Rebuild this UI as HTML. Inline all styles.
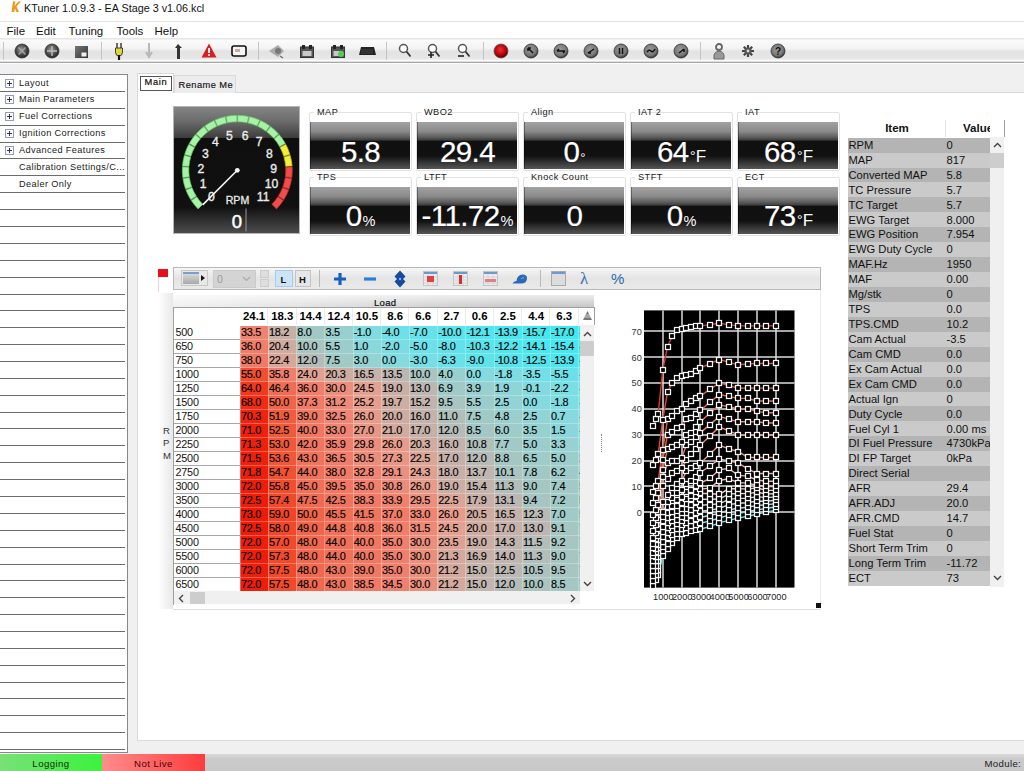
<!DOCTYPE html><html><head><meta charset="utf-8"><style>

*{margin:0;padding:0;box-sizing:border-box}
html,body{width:1024px;height:771px;overflow:hidden;background:#f0f0f0;font-family:"Liberation Sans", sans-serif;color:#000}
.a{position:absolute}
.t{position:absolute;white-space:nowrap;line-height:1}

</style></head><body>
<div class="a" style="left:0;top:0;width:1024px;height:22px;background:#fff;border-bottom:1px solid #e3e3e3"></div>
<svg class="a" style="left:9px;top:0px" width="12" height="13" viewBox="0 0 12 13"><path d="M4 1.5h2.5l-1 4.5 4-4.5h2.5l-4.5 5 2.5 5.5H7.5L6 8.5 5 12H2.5z" fill="#f0961e"/></svg>
<div class="t" style="left:24px;top:3.3px;font-size:10.8px;color:#111">KTuner 1.0.9.3 - EA Stage 3 v1.06.kcl</div>
<div class="a" style="left:0;top:22px;width:1024px;height:17px;background:#fff;border-bottom:1px solid #e6e6e6"></div>
<div class="t" style="left:6.5px;top:26px;font-size:11.5px;color:#111">File</div>
<div class="t" style="left:36px;top:26px;font-size:11.5px;color:#111">Edit</div>
<div class="t" style="left:68.5px;top:26px;font-size:11.5px;color:#111">Tuning</div>
<div class="t" style="left:116.5px;top:26px;font-size:11.5px;color:#111">Tools</div>
<div class="t" style="left:154.5px;top:26px;font-size:11.5px;color:#111">Help</div>
<div class="a" style="left:0;top:40px;width:1024px;height:23px;background:linear-gradient(#fbfbfb 0%,#f4f4f4 35%,#e3e3e3 50%,#e6e6e6 80%,#f7f7f7 88%,#fff 92%,#a8a8a8 96%,#a8a8a8 100%)"></div>
<div class="a" style="left:3px;top:42px;width:1px;height:18px;background:#c4c4c4"></div>
<div class="a" style="left:101px;top:42px;width:1px;height:18px;background:#c4c4c4"></div>
<div class="a" style="left:258px;top:42px;width:1px;height:18px;background:#c4c4c4"></div>
<div class="a" style="left:386px;top:42px;width:1px;height:18px;background:#c4c4c4"></div>
<div class="a" style="left:483px;top:42px;width:1px;height:18px;background:#c4c4c4"></div>
<div class="a" style="left:700px;top:42px;width:1px;height:18px;background:#c4c4c4"></div>
<div class="a" style="left:0;top:63px;width:1024px;height:1px;background:#fcfcfc"></div>
<svg class="a" style="left:14px;top:43px" width="16" height="16" viewBox="0 0 16 16"><defs><radialGradient id="g22" cx="0.45" cy="0.4" r="0.65"><stop offset="0" stop-color="#9a9a9a"/><stop offset="0.65" stop-color="#3e3e3e"/><stop offset="1" stop-color="#1a1a1a"/></radialGradient></defs><circle cx="8" cy="8" r="7" fill="url(#g22)" stroke="#333" stroke-width="0.8"/><path d="M4.5 4.5l7 7M11.5 4.5l-7 7" stroke="#a8a8a8" stroke-width="1.3"/></svg>
<svg class="a" style="left:44px;top:43px" width="16" height="16" viewBox="0 0 16 16"><defs><radialGradient id="g52" cx="0.45" cy="0.4" r="0.65"><stop offset="0" stop-color="#9a9a9a"/><stop offset="0.65" stop-color="#444"/><stop offset="1" stop-color="#1a1a1a"/></radialGradient></defs><circle cx="8" cy="8" r="7" fill="url(#g52)" stroke="#333" stroke-width="0.8"/><path d="M8 3v10M3 8h10" stroke="#bdbdbd" stroke-width="1.4"/></svg>
<svg class="a" style="left:75px;top:46px" width="13" height="12" viewBox="0 0 13 12"><defs><linearGradient id="fl" x1="0" y1="0" x2="1" y2="1"><stop offset="0" stop-color="#777"/><stop offset="1" stop-color="#333"/></linearGradient></defs><rect x="0" y="0" width="13" height="12" fill="url(#fl)"/><rect x="6.5" y="6.5" width="5" height="4" fill="#f0f0f0"/></svg>
<svg class="a" style="left:113px;top:43px" width="12" height="18" viewBox="0 0 12 18"><path d="M4 0v5M8 0v5" stroke="#222" stroke-width="1.3"/><path d="M2.5 5h7v4q0 4-3.5 4t-3.5-4z" fill="#dcd838" stroke="#333" stroke-width="0.9"/><path d="M6 12v5" stroke="#111" stroke-width="2.2"/></svg>
<svg class="a" style="left:144px;top:42px" width="10" height="18" viewBox="0 0 10 18"><path d="M5 1v13M2 10l3 5 3-5" stroke="#b8b8b8" stroke-width="2" fill="none"/></svg>
<svg class="a" style="left:174px;top:43px" width="10" height="17" viewBox="0 0 10 17"><path d="M4 1L1 5h2v11h3V5h2z" fill="#333"/></svg>
<svg class="a" style="left:201px;top:43px" width="16" height="15" viewBox="0 0 16 15"><path d="M8 0.5L15.5 14.5H0.5z" fill="#d42020"/><path d="M8 5v5" stroke="#fff" stroke-width="1.8"/><circle cx="8" cy="12" r="1" fill="#fff"/></svg>
<svg class="a" style="left:231px;top:45px" width="16" height="12" viewBox="0 0 16 12"><rect x="1" y="1" width="14" height="10" rx="2" fill="#f4f4f4" stroke="#111" stroke-width="1.6"/><rect x="4" y="4" width="5" height="3" fill="#caa"/></svg>
<svg class="a" style="left:268px;top:43px" width="17" height="16" viewBox="0 0 17 16"><path d="M1 8l9-6 6 6-6 6z" fill="#aaa"/><circle cx="10" cy="8" r="3" fill="#777"/><path d="M12 13l3 2" stroke="#666" stroke-width="1.2"/></svg>
<svg class="a" style="left:300px;top:45px" width="14" height="13" viewBox="0 0 14 13"><rect x="0.5" y="2" width="13" height="10.5" fill="#555" stroke="#333"/><rect x="2" y="0" width="3" height="4" fill="#222"/><rect x="9" y="0" width="3" height="4" fill="#222"/><rect x="2.5" y="6" width="9" height="5" fill="#c8c8c8"/></svg>
<svg class="a" style="left:331px;top:45px" width="14" height="13" viewBox="0 0 14 13"><rect x="0.5" y="2" width="13" height="10.5" fill="#555" stroke="#333"/><rect x="2" y="0" width="3" height="4" fill="#222"/><rect x="9" y="0" width="3" height="4" fill="#222"/><rect x="2.5" y="6" width="9" height="5" fill="#c8c8c8"/><circle cx="10" cy="9" r="3" fill="#5c5"/></svg>
<svg class="a" style="left:359px;top:47px" width="17" height="9" viewBox="0 0 17 9"><path d="M2 0h13l2 8H0z" fill="#222"/><path d="M3 2v5M5 2v5M7 2v5M9 2v5M11 2v5M13 2v5" stroke="#555" stroke-width="0.7"/></svg>
<svg class="a" style="left:398px;top:43px" width="14" height="16" viewBox="0 0 14 16"><circle cx="5.5" cy="5.5" r="4" fill="#fff" stroke="#555" stroke-width="1.5"/><path d="M8.5 8.5l4 5" stroke="#333" stroke-width="1.8"/></svg>
<svg class="a" style="left:427px;top:43px" width="14" height="16" viewBox="0 0 14 16"><circle cx="5.5" cy="5.5" r="4" fill="#fff" stroke="#555" stroke-width="1.5"/><path d="M8.5 8.5l4 5" stroke="#333" stroke-width="1.8"/><path d="M1 12h6M4 9v6" stroke="#222" stroke-width="1.6"/></svg>
<svg class="a" style="left:457px;top:43px" width="14" height="16" viewBox="0 0 14 16"><circle cx="5.5" cy="5.5" r="4" fill="#fff" stroke="#555" stroke-width="1.5"/><path d="M8.5 8.5l4 5" stroke="#333" stroke-width="1.8"/><path d="M1 13h6" stroke="#222" stroke-width="1.6"/></svg>
<svg class="a" style="left:493px;top:43px" width="16" height="16" viewBox="0 0 16 16"><defs><radialGradient id="rr" cx="0.45" cy="0.4" r="0.6"><stop offset="0" stop-color="#f03030"/><stop offset="0.7" stop-color="#b00000"/><stop offset="1" stop-color="#400"/></radialGradient></defs><circle cx="8" cy="8" r="7" fill="url(#rr)" stroke="#555" stroke-width="0.8"/></svg>
<svg class="a" style="left:523px;top:43px" width="16" height="16" viewBox="0 0 16 16"><defs><radialGradient id="g531" cx="0.45" cy="0.4" r="0.65"><stop offset="0" stop-color="#9a9a9a"/><stop offset="0.65" stop-color="#777"/><stop offset="1" stop-color="#1a1a1a"/></radialGradient></defs><circle cx="8" cy="8" r="7" fill="url(#g531)" stroke="#333" stroke-width="0.8"/><path d="M5 5l5 5M5 5h3M5 5v3" stroke="#111" stroke-width="1.5" fill="none"/></svg>
<svg class="a" style="left:553px;top:43px" width="16" height="16" viewBox="0 0 16 16"><defs><radialGradient id="g561" cx="0.45" cy="0.4" r="0.65"><stop offset="0" stop-color="#9a9a9a"/><stop offset="0.65" stop-color="#777"/><stop offset="1" stop-color="#1a1a1a"/></radialGradient></defs><circle cx="8" cy="8" r="7" fill="url(#g561)" stroke="#333" stroke-width="0.8"/><path d="M4 8h8M4 8l2-2M12 8l-2 2" stroke="#111" stroke-width="1.5" fill="none"/></svg>
<svg class="a" style="left:583px;top:43px" width="16" height="16" viewBox="0 0 16 16"><defs><radialGradient id="g591" cx="0.45" cy="0.4" r="0.65"><stop offset="0" stop-color="#9a9a9a"/><stop offset="0.65" stop-color="#777"/><stop offset="1" stop-color="#1a1a1a"/></radialGradient></defs><circle cx="8" cy="8" r="7" fill="url(#g591)" stroke="#333" stroke-width="0.8"/><path d="M5 10l6-4M5 10h3" stroke="#111" stroke-width="1.5" fill="none"/></svg>
<svg class="a" style="left:613px;top:43px" width="16" height="16" viewBox="0 0 16 16"><defs><radialGradient id="g621" cx="0.45" cy="0.4" r="0.65"><stop offset="0" stop-color="#9a9a9a"/><stop offset="0.65" stop-color="#777"/><stop offset="1" stop-color="#1a1a1a"/></radialGradient></defs><circle cx="8" cy="8" r="7" fill="url(#g621)" stroke="#333" stroke-width="0.8"/><path d="M6.5 5v6M9.5 5v6" stroke="#111" stroke-width="1.5" fill="none"/></svg>
<svg class="a" style="left:643px;top:43px" width="16" height="16" viewBox="0 0 16 16"><defs><radialGradient id="g651" cx="0.45" cy="0.4" r="0.65"><stop offset="0" stop-color="#9a9a9a"/><stop offset="0.65" stop-color="#777"/><stop offset="1" stop-color="#1a1a1a"/></radialGradient></defs><circle cx="8" cy="8" r="7" fill="url(#g651)" stroke="#333" stroke-width="0.8"/><path d="M4 9q2-3 4-1t4-2" stroke="#111" stroke-width="1.5" fill="none"/></svg>
<svg class="a" style="left:673px;top:43px" width="16" height="16" viewBox="0 0 16 16"><defs><radialGradient id="g681" cx="0.45" cy="0.4" r="0.65"><stop offset="0" stop-color="#9a9a9a"/><stop offset="0.65" stop-color="#777"/><stop offset="1" stop-color="#1a1a1a"/></radialGradient></defs><circle cx="8" cy="8" r="7" fill="url(#g681)" stroke="#333" stroke-width="0.8"/><path d="M6 10l5-4M11 6v3" stroke="#111" stroke-width="1.5" fill="none"/></svg>
<svg class="a" style="left:712px;top:42px" width="14" height="18" viewBox="0 0 14 18"><circle cx="7" cy="5" r="3" fill="none" stroke="#666" stroke-width="1.8"/><path d="M2 17v-3q0-4 5-5 5 1 5 5v3z" fill="#999" stroke="#666"/></svg>
<svg class="a" style="left:741px;top:44px" width="14" height="14" viewBox="0 0 14 14"><g stroke="#444" stroke-width="2.2"><path d="M7 1v12M1 7h12M2.8 2.8l8.4 8.4M11.2 2.8l-8.4 8.4"/></g><circle cx="7" cy="7" r="3.6" fill="#555"/><circle cx="7" cy="7" r="1.4" fill="#ddd"/></svg>
<svg class="a" style="left:770px;top:43px" width="16" height="16" viewBox="0 0 16 16"><defs><radialGradient id="g778" cx="0.45" cy="0.4" r="0.65"><stop offset="0" stop-color="#9a9a9a"/><stop offset="0.65" stop-color="#777"/><stop offset="1" stop-color="#1a1a1a"/></radialGradient></defs><circle cx="8" cy="8" r="7" fill="url(#g778)" stroke="#333" stroke-width="0.8"/><text x="8" y="11.5" font-size="10" font-weight="bold" text-anchor="middle" fill="#111" font-family="Liberation Sans">?</text></svg>
<div class="a" style="left:0;top:74px;width:128px;height:679px;background:#fff;border:1px solid #888;border-left:none"></div>
<div class="a" style="left:0;top:91px;width:125px;height:1px;background:#6c6c6c"></div>
<div class="a" style="left:0;top:108px;width:125px;height:1px;background:#6c6c6c"></div>
<div class="a" style="left:0;top:125px;width:125px;height:1px;background:#6c6c6c"></div>
<div class="a" style="left:0;top:142px;width:125px;height:1px;background:#6c6c6c"></div>
<div class="a" style="left:0;top:158px;width:125px;height:1px;background:#6c6c6c"></div>
<div class="a" style="left:0;top:175px;width:125px;height:1px;background:#6c6c6c"></div>
<div class="a" style="left:0;top:192px;width:125px;height:1px;background:#6c6c6c"></div>
<div class="a" style="left:0;top:209px;width:125px;height:1px;background:#6c6c6c"></div>
<div class="a" style="left:0;top:226px;width:125px;height:1px;background:#6c6c6c"></div>
<div class="a" style="left:0;top:243px;width:125px;height:1px;background:#6c6c6c"></div>
<div class="a" style="left:0;top:260px;width:125px;height:1px;background:#6c6c6c"></div>
<div class="a" style="left:0;top:277px;width:125px;height:1px;background:#6c6c6c"></div>
<div class="a" style="left:0;top:294px;width:125px;height:1px;background:#6c6c6c"></div>
<div class="a" style="left:0;top:310px;width:125px;height:1px;background:#6c6c6c"></div>
<div class="a" style="left:0;top:327px;width:125px;height:1px;background:#6c6c6c"></div>
<div class="a" style="left:0;top:344px;width:125px;height:1px;background:#6c6c6c"></div>
<div class="a" style="left:0;top:361px;width:125px;height:1px;background:#6c6c6c"></div>
<div class="a" style="left:0;top:378px;width:125px;height:1px;background:#6c6c6c"></div>
<div class="a" style="left:0;top:395px;width:125px;height:1px;background:#6c6c6c"></div>
<div class="a" style="left:0;top:412px;width:125px;height:1px;background:#6c6c6c"></div>
<div class="a" style="left:0;top:428px;width:125px;height:1px;background:#6c6c6c"></div>
<div class="a" style="left:0;top:445px;width:125px;height:1px;background:#6c6c6c"></div>
<div class="a" style="left:0;top:462px;width:125px;height:1px;background:#6c6c6c"></div>
<div class="a" style="left:0;top:479px;width:125px;height:1px;background:#6c6c6c"></div>
<div class="a" style="left:0;top:496px;width:125px;height:1px;background:#6c6c6c"></div>
<div class="a" style="left:0;top:513px;width:125px;height:1px;background:#6c6c6c"></div>
<div class="a" style="left:0;top:530px;width:125px;height:1px;background:#6c6c6c"></div>
<div class="a" style="left:0;top:547px;width:125px;height:1px;background:#6c6c6c"></div>
<div class="a" style="left:0;top:564px;width:125px;height:1px;background:#6c6c6c"></div>
<div class="a" style="left:0;top:580px;width:125px;height:1px;background:#6c6c6c"></div>
<div class="a" style="left:0;top:597px;width:125px;height:1px;background:#6c6c6c"></div>
<div class="a" style="left:0;top:614px;width:125px;height:1px;background:#6c6c6c"></div>
<div class="a" style="left:0;top:631px;width:125px;height:1px;background:#6c6c6c"></div>
<div class="a" style="left:0;top:648px;width:125px;height:1px;background:#6c6c6c"></div>
<div class="a" style="left:0;top:665px;width:125px;height:1px;background:#6c6c6c"></div>
<div class="a" style="left:0;top:682px;width:125px;height:1px;background:#6c6c6c"></div>
<div class="a" style="left:0;top:698px;width:125px;height:1px;background:#6c6c6c"></div>
<div class="a" style="left:0;top:715px;width:125px;height:1px;background:#6c6c6c"></div>
<div class="a" style="left:0;top:732px;width:125px;height:1px;background:#6c6c6c"></div>
<div class="a" style="left:0;top:749px;width:125px;height:1px;background:#6c6c6c"></div>
<div class="a" style="left:5px;top:78.5px;width:9px;height:9px;border:1px solid #9a9ab0;background:#f8f8ff"></div>
<div class="a" style="left:7px;top:82.5px;width:5px;height:1px;background:#334"></div>
<div class="a" style="left:9px;top:80.5px;width:1px;height:5px;background:#334"></div>
<div class="t" style="left:19px;top:78.5px;font-size:9.2px;letter-spacing:0.38px;color:#1a1a1a">Layout</div>
<div class="a" style="left:5px;top:95.4px;width:9px;height:9px;border:1px solid #9a9ab0;background:#f8f8ff"></div>
<div class="a" style="left:7px;top:99.4px;width:5px;height:1px;background:#334"></div>
<div class="a" style="left:9px;top:97.4px;width:1px;height:5px;background:#334"></div>
<div class="t" style="left:19px;top:95.4px;font-size:9.2px;letter-spacing:0.38px;color:#1a1a1a">Main Parameters</div>
<div class="a" style="left:5px;top:112.2px;width:9px;height:9px;border:1px solid #9a9ab0;background:#f8f8ff"></div>
<div class="a" style="left:7px;top:116.2px;width:5px;height:1px;background:#334"></div>
<div class="a" style="left:9px;top:114.2px;width:1px;height:5px;background:#334"></div>
<div class="t" style="left:19px;top:112.2px;font-size:9.2px;letter-spacing:0.38px;color:#1a1a1a">Fuel Corrections</div>
<div class="a" style="left:5px;top:129.1px;width:9px;height:9px;border:1px solid #9a9ab0;background:#f8f8ff"></div>
<div class="a" style="left:7px;top:133.1px;width:5px;height:1px;background:#334"></div>
<div class="a" style="left:9px;top:131.1px;width:1px;height:5px;background:#334"></div>
<div class="t" style="left:19px;top:129.1px;font-size:9.2px;letter-spacing:0.38px;color:#1a1a1a">Ignition Corrections</div>
<div class="a" style="left:5px;top:146.0px;width:9px;height:9px;border:1px solid #9a9ab0;background:#f8f8ff"></div>
<div class="a" style="left:7px;top:150.0px;width:5px;height:1px;background:#334"></div>
<div class="a" style="left:9px;top:148.0px;width:1px;height:5px;background:#334"></div>
<div class="t" style="left:19px;top:146.0px;font-size:9.2px;letter-spacing:0.38px;color:#1a1a1a">Advanced Features</div>
<div class="t" style="left:19px;top:162.9px;font-size:9.2px;letter-spacing:0.38px;color:#1a1a1a">Calibration Settings/C...</div>
<div class="t" style="left:19px;top:179.8px;font-size:9.2px;letter-spacing:0.38px;color:#1a1a1a">Dealer Only</div>
<div class="a" style="left:137px;top:92px;width:900px;height:649px;background:#fff;border:1px solid #d9d9d9"></div>
<div class="a" style="left:174px;top:75px;width:62px;height:18px;background:#ececec;border:1px solid #dadada;border-bottom:none"></div>
<div class="t" style="left:178.5px;top:80.6px;font-size:9.3px;letter-spacing:0.45px;color:#111;-webkit-text-stroke:0.15px #111">Rename Me</div>
<div class="a" style="left:137px;top:73px;width:37px;height:20px;background:#fff;border:1px solid #d9d9d9;border-bottom:none"></div>
<div class="a" style="left:140px;top:76px;width:32px;height:15px;border:1px solid #555"></div>
<div class="t" style="left:144.5px;top:78.3px;font-size:9.3px;letter-spacing:0.7px;color:#111;-webkit-text-stroke:0.2px #111">Main</div>
<svg class="a" style="left:173px;top:106px" width="128" height="128" viewBox="0 0 128 128"><defs><linearGradient id="gbg" x1="0" y1="0" x2="0" y2="1"><stop offset="0" stop-color="#858585"/><stop offset="0.12" stop-color="#6a6a6a"/><stop offset="0.25" stop-color="#3c3c3c"/><stop offset="0.252" stop-color="#0f0f0f"/><stop offset="0.79" stop-color="#101010"/><stop offset="1" stop-color="#4e4e4e"/></linearGradient></defs><rect x="0.5" y="0.5" width="126" height="127" fill="url(#gbg)" stroke="#b4b4b4" stroke-width="1"/><path d="M25.10 102.88A55.0 55.0 0 0 1 18.27 94.40L23.71 90.84A48.5 48.5 0 0 0 29.74 98.32Z" fill="#a6f2a6" stroke="#66c466" stroke-width="0.7"/><path d="M17.80 93.67A55.0 55.0 0 0 1 12.92 83.92L18.99 81.61A48.5 48.5 0 0 0 23.29 90.20Z" fill="#a6f2a6" stroke="#66c466" stroke-width="0.7"/><path d="M12.62 83.12A55.0 55.0 0 0 1 9.92 72.55L16.35 71.58A48.5 48.5 0 0 0 18.73 80.89Z" fill="#a6f2a6" stroke="#66c466" stroke-width="0.7"/><path d="M9.80 71.70A55.0 55.0 0 0 1 9.41 60.81L15.90 61.22A48.5 48.5 0 0 0 16.24 70.83Z" fill="#a6f2a6" stroke="#66c466" stroke-width="0.7"/><path d="M9.47 59.95A55.0 55.0 0 0 1 11.41 49.22L17.66 51.00A48.5 48.5 0 0 0 15.95 60.46Z" fill="#a6f2a6" stroke="#66c466" stroke-width="0.7"/><path d="M11.65 48.39A55.0 55.0 0 0 1 15.82 38.32L21.55 41.39A48.5 48.5 0 0 0 17.87 50.27Z" fill="#a6f2a6" stroke="#66c466" stroke-width="0.7"/><path d="M16.24 37.56A55.0 55.0 0 0 1 22.45 28.61L27.40 32.83A48.5 48.5 0 0 0 21.92 40.72Z" fill="#a6f2a6" stroke="#66c466" stroke-width="0.7"/><path d="M23.02 27.96A55.0 55.0 0 0 1 30.99 20.53L34.93 25.70A48.5 48.5 0 0 0 27.90 32.25Z" fill="#a6f2a6" stroke="#66c466" stroke-width="0.7"/><path d="M31.69 20.01A55.0 55.0 0 0 1 41.06 14.45L43.81 20.34A48.5 48.5 0 0 0 35.54 25.25Z" fill="#a6f2a6" stroke="#66c466" stroke-width="0.7"/><path d="M41.85 14.09A55.0 55.0 0 0 1 52.19 10.65L53.62 16.99A48.5 48.5 0 0 0 44.50 20.03Z" fill="#a6f2a6" stroke="#66c466" stroke-width="0.7"/><path d="M53.03 10.47A55.0 55.0 0 0 1 63.87 9.30L63.92 15.80A48.5 48.5 0 0 0 54.36 16.83Z" fill="#a6f2a6" stroke="#66c466" stroke-width="0.7"/><path d="M64.73 9.30A55.0 55.0 0 0 1 75.57 10.47L74.24 16.83A48.5 48.5 0 0 0 64.68 15.80Z" fill="#a6f2a6" stroke="#66c466" stroke-width="0.7"/><path d="M76.41 10.65A55.0 55.0 0 0 1 86.75 14.09L84.10 20.03A48.5 48.5 0 0 0 74.98 16.99Z" fill="#a6f2a6" stroke="#66c466" stroke-width="0.7"/><path d="M87.54 14.45A55.0 55.0 0 0 1 96.91 20.01L93.06 25.25A48.5 48.5 0 0 0 84.79 20.34Z" fill="#a6f2a6" stroke="#66c466" stroke-width="0.7"/><path d="M97.61 20.53A55.0 55.0 0 0 1 105.58 27.96L100.70 32.25A48.5 48.5 0 0 0 93.67 25.70Z" fill="#a6f2a6" stroke="#66c466" stroke-width="0.7"/><path d="M106.15 28.61A55.0 55.0 0 0 1 112.36 37.56L106.68 40.72A48.5 48.5 0 0 0 101.20 32.83Z" fill="#a6f2a6" stroke="#66c466" stroke-width="0.7"/><path d="M112.78 38.32A55.0 55.0 0 0 1 116.95 48.39L110.73 50.27A48.5 48.5 0 0 0 107.05 41.39Z" fill="#f2f034" stroke="#b8b020" stroke-width="0.7"/><path d="M117.19 49.22A55.0 55.0 0 0 1 119.13 59.95L112.65 60.46A48.5 48.5 0 0 0 110.94 51.00Z" fill="#f2f034" stroke="#b8b020" stroke-width="0.7"/><path d="M119.19 60.81A55.0 55.0 0 0 1 118.80 71.70L112.36 70.83A48.5 48.5 0 0 0 112.70 61.22Z" fill="#f44a4a" stroke="#c03030" stroke-width="0.7"/><path d="M118.68 72.55A55.0 55.0 0 0 1 115.98 83.12L109.87 80.89A48.5 48.5 0 0 0 112.25 71.58Z" fill="#f44a4a" stroke="#c03030" stroke-width="0.7"/><path d="M115.68 83.92A55.0 55.0 0 0 1 110.80 93.67L105.31 90.20A48.5 48.5 0 0 0 109.61 81.61Z" fill="#f44a4a" stroke="#c03030" stroke-width="0.7"/><path d="M110.33 94.40A55.0 55.0 0 0 1 103.50 102.88L98.86 98.32A48.5 48.5 0 0 0 104.89 90.84Z" fill="#f44a4a" stroke="#c03030" stroke-width="0.7"/><text x="38.5" y="95.3" font-size="12.2" fill="#ececec" stroke="#ececec" stroke-width="0.35" text-anchor="middle" font-family="Liberation Sans">0</text><text x="30.1" y="82.3" font-size="12.2" fill="#ececec" stroke="#ececec" stroke-width="0.35" text-anchor="middle" font-family="Liberation Sans">1</text><text x="27.9" y="66.9" font-size="12.2" fill="#ececec" stroke="#ececec" stroke-width="0.35" text-anchor="middle" font-family="Liberation Sans">2</text><text x="32.3" y="52.0" font-size="12.2" fill="#ececec" stroke="#ececec" stroke-width="0.35" text-anchor="middle" font-family="Liberation Sans">3</text><text x="42.4" y="40.3" font-size="12.2" fill="#ececec" stroke="#ececec" stroke-width="0.35" text-anchor="middle" font-family="Liberation Sans">4</text><text x="56.5" y="33.8" font-size="12.2" fill="#ececec" stroke="#ececec" stroke-width="0.35" text-anchor="middle" font-family="Liberation Sans">5</text><text x="72.1" y="33.8" font-size="12.2" fill="#ececec" stroke="#ececec" stroke-width="0.35" text-anchor="middle" font-family="Liberation Sans">6</text><text x="86.2" y="40.3" font-size="12.2" fill="#ececec" stroke="#ececec" stroke-width="0.35" text-anchor="middle" font-family="Liberation Sans">7</text><text x="96.3" y="52.0" font-size="12.2" fill="#ececec" stroke="#ececec" stroke-width="0.35" text-anchor="middle" font-family="Liberation Sans">8</text><text x="100.7" y="66.9" font-size="12.2" fill="#ececec" stroke="#ececec" stroke-width="0.35" text-anchor="middle" font-family="Liberation Sans">9</text><text x="98.5" y="82.3" font-size="12.2" fill="#ececec" stroke="#ececec" stroke-width="0.35" text-anchor="middle" font-family="Liberation Sans">10</text><text x="90.1" y="95.3" font-size="12.2" fill="#ececec" stroke="#ececec" stroke-width="0.35" text-anchor="middle" font-family="Liberation Sans">11</text><path d="M64.3 64.3L29.7 98.9" stroke="#f4f4f4" stroke-width="1.6"/><circle cx="64.3" cy="64.3" r="2.4" fill="#f4f4f4"/><text x="64.5" y="97.5" font-size="10.6" fill="#e8e8e8" stroke="#e8e8e8" stroke-width="0.3" text-anchor="middle" font-family="Liberation Sans">RPM</text><text x="64" y="122" font-size="18.5" fill="#fff" stroke="#fff" stroke-width="0.5" text-anchor="middle" font-family="Liberation Sans">0</text><path d="M73 102.5V125.5" stroke="#9a9a9a" stroke-width="1"/></svg>
<svg width="0" height="0" style="position:absolute"><defs><linearGradient id="dbg" x1="0" y1="0" x2="0" y2="1"><stop offset="0" stop-color="#a2a2a2"/><stop offset="0.2" stop-color="#8a8a8a"/><stop offset="0.32" stop-color="#5e5e5e"/><stop offset="0.39" stop-color="#3a3a3a"/><stop offset="0.40" stop-color="#101010"/><stop offset="0.72" stop-color="#111"/><stop offset="1" stop-color="#565656"/></linearGradient></defs></svg>
<div class="a" style="left:309px;top:112.0px;width:103px;height:59px;border:1px solid #e2e2e2;border-radius:2px"></div>
<svg class="a" style="left:310px;top:122.0px" width="100" height="47"><rect width="100" height="47" fill="url(#dbg)"/><rect x="0" y="0" width="1" height="47" fill="#000" opacity="0.35"/></svg>
<div class="a" style="left:314px;top:109.0px;height:9px;padding:0 2px;background:#fff"></div>
<div class="t" style="left:317px;top:108.2px;font-size:9.2px;letter-spacing:0.45px;color:#1a1a1a">MAP</div>
<div class="t" style="left:309px;top:136.8px;width:103px;text-align:center;font-size:29.5px;letter-spacing:-0.6px;color:#fff;-webkit-text-stroke:0.2px #fff">5.8</div>
<div class="a" style="left:416px;top:112.0px;width:103px;height:59px;border:1px solid #e2e2e2;border-radius:2px"></div>
<svg class="a" style="left:417px;top:122.0px" width="100" height="47"><rect width="100" height="47" fill="url(#dbg)"/><rect x="0" y="0" width="1" height="47" fill="#000" opacity="0.35"/></svg>
<div class="a" style="left:421px;top:109.0px;height:9px;padding:0 2px;background:#fff"></div>
<div class="t" style="left:424px;top:108.2px;font-size:9.2px;letter-spacing:0.45px;color:#1a1a1a">WBO2</div>
<div class="t" style="left:416px;top:136.8px;width:103px;text-align:center;font-size:29.5px;letter-spacing:-0.6px;color:#fff;-webkit-text-stroke:0.2px #fff">29.4</div>
<div class="a" style="left:523px;top:112.0px;width:103px;height:59px;border:1px solid #e2e2e2;border-radius:2px"></div>
<svg class="a" style="left:524px;top:122.0px" width="100" height="47"><rect width="100" height="47" fill="url(#dbg)"/><rect x="0" y="0" width="1" height="47" fill="#000" opacity="0.35"/></svg>
<div class="a" style="left:528px;top:109.0px;height:9px;padding:0 2px;background:#fff"></div>
<div class="t" style="left:531px;top:108.2px;font-size:9.2px;letter-spacing:0.45px;color:#1a1a1a">Align</div>
<div class="t" style="left:523px;top:136.8px;width:103px;text-align:center;font-size:29.5px;letter-spacing:-0.6px;color:#fff;-webkit-text-stroke:0.2px #fff">0<span style="font-size:13px;letter-spacing:0;margin-left:1px;-webkit-text-stroke:0">°</span></div>
<div class="a" style="left:630px;top:112.0px;width:103px;height:59px;border:1px solid #e2e2e2;border-radius:2px"></div>
<svg class="a" style="left:631px;top:122.0px" width="100" height="47"><rect width="100" height="47" fill="url(#dbg)"/><rect x="0" y="0" width="1" height="47" fill="#000" opacity="0.35"/></svg>
<div class="a" style="left:635px;top:109.0px;height:9px;padding:0 2px;background:#fff"></div>
<div class="t" style="left:638px;top:108.2px;font-size:9.2px;letter-spacing:0.45px;color:#1a1a1a">IAT 2</div>
<div class="t" style="left:630px;top:136.8px;width:103px;text-align:center;font-size:29.5px;letter-spacing:-0.6px;color:#fff;-webkit-text-stroke:0.2px #fff">64<span style="font-size:14px;letter-spacing:0;margin-left:1.5px;-webkit-text-stroke:0;position:relative;top:-1px">°</span><span style="font-size:17px;letter-spacing:0;-webkit-text-stroke:0">F</span></div>
<div class="a" style="left:737px;top:112.0px;width:103px;height:59px;border:1px solid #e2e2e2;border-radius:2px"></div>
<svg class="a" style="left:738px;top:122.0px" width="100" height="47"><rect width="100" height="47" fill="url(#dbg)"/><rect x="0" y="0" width="1" height="47" fill="#000" opacity="0.35"/></svg>
<div class="a" style="left:742px;top:109.0px;height:9px;padding:0 2px;background:#fff"></div>
<div class="t" style="left:745px;top:108.2px;font-size:9.2px;letter-spacing:0.45px;color:#1a1a1a">IAT</div>
<div class="t" style="left:737px;top:136.8px;width:103px;text-align:center;font-size:29.5px;letter-spacing:-0.6px;color:#fff;-webkit-text-stroke:0.2px #fff">68<span style="font-size:14px;letter-spacing:0;margin-left:1.5px;-webkit-text-stroke:0;position:relative;top:-1px">°</span><span style="font-size:17px;letter-spacing:0;-webkit-text-stroke:0">F</span></div>
<div class="a" style="left:309px;top:176.5px;width:103px;height:59px;border:1px solid #e2e2e2;border-radius:2px"></div>
<svg class="a" style="left:310px;top:186.5px" width="100" height="47"><rect width="100" height="47" fill="url(#dbg)"/><rect x="0" y="0" width="1" height="47" fill="#000" opacity="0.35"/></svg>
<div class="a" style="left:314px;top:173.5px;height:9px;padding:0 2px;background:#fff"></div>
<div class="t" style="left:317px;top:172.7px;font-size:9.2px;letter-spacing:0.45px;color:#1a1a1a">TPS</div>
<div class="t" style="left:309px;top:201.3px;width:103px;text-align:center;font-size:29.5px;letter-spacing:-0.6px;color:#fff;-webkit-text-stroke:0.2px #fff">0<span style="font-size:14.5px;letter-spacing:0;margin-left:1px;-webkit-text-stroke:0">%</span></div>
<div class="a" style="left:416px;top:176.5px;width:103px;height:59px;border:1px solid #e2e2e2;border-radius:2px"></div>
<svg class="a" style="left:417px;top:186.5px" width="100" height="47"><rect width="100" height="47" fill="url(#dbg)"/><rect x="0" y="0" width="1" height="47" fill="#000" opacity="0.35"/></svg>
<div class="a" style="left:421px;top:173.5px;height:9px;padding:0 2px;background:#fff"></div>
<div class="t" style="left:424px;top:172.7px;font-size:9.2px;letter-spacing:0.45px;color:#1a1a1a">LTFT</div>
<div class="t" style="left:416px;top:201.3px;width:103px;text-align:center;font-size:29.5px;letter-spacing:-0.6px;color:#fff;-webkit-text-stroke:0.2px #fff">-11.72<span style="font-size:14.5px;letter-spacing:0;margin-left:1px;-webkit-text-stroke:0">%</span></div>
<div class="a" style="left:523px;top:176.5px;width:103px;height:59px;border:1px solid #e2e2e2;border-radius:2px"></div>
<svg class="a" style="left:524px;top:186.5px" width="100" height="47"><rect width="100" height="47" fill="url(#dbg)"/><rect x="0" y="0" width="1" height="47" fill="#000" opacity="0.35"/></svg>
<div class="a" style="left:528px;top:173.5px;height:9px;padding:0 2px;background:#fff"></div>
<div class="t" style="left:531px;top:172.7px;font-size:9.2px;letter-spacing:0.45px;color:#1a1a1a">Knock Count</div>
<div class="t" style="left:523px;top:201.3px;width:103px;text-align:center;font-size:29.5px;letter-spacing:-0.6px;color:#fff;-webkit-text-stroke:0.2px #fff">0</div>
<div class="a" style="left:630px;top:176.5px;width:103px;height:59px;border:1px solid #e2e2e2;border-radius:2px"></div>
<svg class="a" style="left:631px;top:186.5px" width="100" height="47"><rect width="100" height="47" fill="url(#dbg)"/><rect x="0" y="0" width="1" height="47" fill="#000" opacity="0.35"/></svg>
<div class="a" style="left:635px;top:173.5px;height:9px;padding:0 2px;background:#fff"></div>
<div class="t" style="left:638px;top:172.7px;font-size:9.2px;letter-spacing:0.45px;color:#1a1a1a">STFT</div>
<div class="t" style="left:630px;top:201.3px;width:103px;text-align:center;font-size:29.5px;letter-spacing:-0.6px;color:#fff;-webkit-text-stroke:0.2px #fff">0<span style="font-size:14.5px;letter-spacing:0;margin-left:1px;-webkit-text-stroke:0">%</span></div>
<div class="a" style="left:737px;top:176.5px;width:103px;height:59px;border:1px solid #e2e2e2;border-radius:2px"></div>
<svg class="a" style="left:738px;top:186.5px" width="100" height="47"><rect width="100" height="47" fill="url(#dbg)"/><rect x="0" y="0" width="1" height="47" fill="#000" opacity="0.35"/></svg>
<div class="a" style="left:742px;top:173.5px;height:9px;padding:0 2px;background:#fff"></div>
<div class="t" style="left:745px;top:172.7px;font-size:9.2px;letter-spacing:0.45px;color:#1a1a1a">ECT</div>
<div class="t" style="left:737px;top:201.3px;width:103px;text-align:center;font-size:29.5px;letter-spacing:-0.6px;color:#fff;-webkit-text-stroke:0.2px #fff">73<span style="font-size:14px;letter-spacing:0;margin-left:1.5px;-webkit-text-stroke:0;position:relative;top:-1px">°</span><span style="font-size:17px;letter-spacing:0;-webkit-text-stroke:0">F</span></div>
<div class="a" style="left:945px;top:120px;width:1px;height:17px;background:#e4e4e4"></div>
<div class="a" style="left:1004px;top:120px;width:1px;height:17px;background:#a0a0a0"></div>
<div class="t" style="left:848px;top:123px;width:98px;text-align:center;font-size:11.5px;font-weight:bold;color:#111">Item</div>
<div class="a" style="left:946px;top:120px;width:44px;height:17px;overflow:hidden"><div class="t" style="left:17px;top:3px;font-size:11.5px;font-weight:bold;color:#111">Value</div></div>
<div class="a" style="left:848px;top:137px;width:142px;height:450px;overflow:hidden">
<div class="a" style="left:0;top:1px;width:142px;height:15px;background:#b4b4b4"></div>
<div class="t" style="left:0.5px;top:2.8px;font-size:11.2px;color:#111">RPM</div>
<div class="t" style="left:98.5px;top:2.8px;font-size:11.2px;color:#111">0</div>
<div class="a" style="left:0;top:16px;width:142px;height:15px;background:#cacaca"></div>
<div class="t" style="left:0.5px;top:17.7px;font-size:11.2px;color:#111">MAP</div>
<div class="t" style="left:98.5px;top:17.7px;font-size:11.2px;color:#111">817</div>
<div class="a" style="left:0;top:31px;width:142px;height:14px;background:#b4b4b4"></div>
<div class="t" style="left:0.5px;top:32.7px;font-size:11.2px;color:#111">Converted MAP</div>
<div class="t" style="left:98.5px;top:32.7px;font-size:11.2px;color:#111">5.8</div>
<div class="a" style="left:0;top:45px;width:142px;height:15px;background:#cacaca"></div>
<div class="t" style="left:0.5px;top:47.6px;font-size:11.2px;color:#111">TC Pressure</div>
<div class="t" style="left:98.5px;top:47.6px;font-size:11.2px;color:#111">5.7</div>
<div class="a" style="left:0;top:60px;width:142px;height:15px;background:#b4b4b4"></div>
<div class="t" style="left:0.5px;top:62.5px;font-size:11.2px;color:#111">TC Target</div>
<div class="t" style="left:98.5px;top:62.5px;font-size:11.2px;color:#111">5.7</div>
<div class="a" style="left:0;top:75px;width:142px;height:15px;background:#cacaca"></div>
<div class="t" style="left:0.5px;top:77.5px;font-size:11.2px;color:#111">EWG Target</div>
<div class="t" style="left:98.5px;top:77.5px;font-size:11.2px;color:#111">8.000</div>
<div class="a" style="left:0;top:90px;width:142px;height:15px;background:#b4b4b4"></div>
<div class="t" style="left:0.5px;top:92.4px;font-size:11.2px;color:#111">EWG Position</div>
<div class="t" style="left:98.5px;top:92.4px;font-size:11.2px;color:#111">7.954</div>
<div class="a" style="left:0;top:105px;width:142px;height:15px;background:#cacaca"></div>
<div class="t" style="left:0.5px;top:107.3px;font-size:11.2px;color:#111">EWG Duty Cycle</div>
<div class="t" style="left:98.5px;top:107.3px;font-size:11.2px;color:#111">0</div>
<div class="a" style="left:0;top:120px;width:142px;height:15px;background:#b4b4b4"></div>
<div class="t" style="left:0.5px;top:122.2px;font-size:11.2px;color:#111">MAF.Hz</div>
<div class="t" style="left:98.5px;top:122.2px;font-size:11.2px;color:#111">1950</div>
<div class="a" style="left:0;top:135px;width:142px;height:15px;background:#cacaca"></div>
<div class="t" style="left:0.5px;top:137.2px;font-size:11.2px;color:#111">MAF</div>
<div class="t" style="left:98.5px;top:137.2px;font-size:11.2px;color:#111">0.00</div>
<div class="a" style="left:0;top:150px;width:142px;height:15px;background:#b4b4b4"></div>
<div class="t" style="left:0.5px;top:152.1px;font-size:11.2px;color:#111">Mg/stk</div>
<div class="t" style="left:98.5px;top:152.1px;font-size:11.2px;color:#111">0</div>
<div class="a" style="left:0;top:165px;width:142px;height:15px;background:#cacaca"></div>
<div class="t" style="left:0.5px;top:167.0px;font-size:11.2px;color:#111">TPS</div>
<div class="t" style="left:98.5px;top:167.0px;font-size:11.2px;color:#111">0.0</div>
<div class="a" style="left:0;top:180px;width:142px;height:15px;background:#b4b4b4"></div>
<div class="t" style="left:0.5px;top:182.0px;font-size:11.2px;color:#111">TPS.CMD</div>
<div class="t" style="left:98.5px;top:182.0px;font-size:11.2px;color:#111">10.2</div>
<div class="a" style="left:0;top:195px;width:142px;height:15px;background:#cacaca"></div>
<div class="t" style="left:0.5px;top:196.9px;font-size:11.2px;color:#111">Cam Actual</div>
<div class="t" style="left:98.5px;top:196.9px;font-size:11.2px;color:#111">-3.5</div>
<div class="a" style="left:0;top:210px;width:142px;height:15px;background:#b4b4b4"></div>
<div class="t" style="left:0.5px;top:211.8px;font-size:11.2px;color:#111">Cam CMD</div>
<div class="t" style="left:98.5px;top:211.8px;font-size:11.2px;color:#111">0.0</div>
<div class="a" style="left:0;top:225px;width:142px;height:15px;background:#cacaca"></div>
<div class="t" style="left:0.5px;top:226.7px;font-size:11.2px;color:#111">Ex Cam Actual</div>
<div class="t" style="left:98.5px;top:226.7px;font-size:11.2px;color:#111">0.0</div>
<div class="a" style="left:0;top:240px;width:142px;height:15px;background:#b4b4b4"></div>
<div class="t" style="left:0.5px;top:241.7px;font-size:11.2px;color:#111">Ex Cam CMD</div>
<div class="t" style="left:98.5px;top:241.7px;font-size:11.2px;color:#111">0.0</div>
<div class="a" style="left:0;top:255px;width:142px;height:14px;background:#cacaca"></div>
<div class="t" style="left:0.5px;top:256.6px;font-size:11.2px;color:#111">Actual Ign</div>
<div class="t" style="left:98.5px;top:256.6px;font-size:11.2px;color:#111">0</div>
<div class="a" style="left:0;top:269px;width:142px;height:15px;background:#b4b4b4"></div>
<div class="t" style="left:0.5px;top:271.5px;font-size:11.2px;color:#111">Duty Cycle</div>
<div class="t" style="left:98.5px;top:271.5px;font-size:11.2px;color:#111">0.0</div>
<div class="a" style="left:0;top:284px;width:142px;height:15px;background:#cacaca"></div>
<div class="t" style="left:0.5px;top:286.5px;font-size:11.2px;color:#111">Fuel Cyl 1</div>
<div class="t" style="left:98.5px;top:286.5px;font-size:11.2px;color:#111">0.00 ms</div>
<div class="a" style="left:0;top:299px;width:142px;height:15px;background:#b4b4b4"></div>
<div class="t" style="left:0.5px;top:301.4px;font-size:11.2px;color:#111">DI Fuel Pressure</div>
<div class="t" style="left:98.5px;top:301.4px;font-size:11.2px;color:#111">4730kPa</div>
<div class="a" style="left:0;top:314px;width:142px;height:15px;background:#cacaca"></div>
<div class="t" style="left:0.5px;top:316.3px;font-size:11.2px;color:#111">DI FP Target</div>
<div class="t" style="left:98.5px;top:316.3px;font-size:11.2px;color:#111">0kPa</div>
<div class="a" style="left:0;top:329px;width:142px;height:15px;background:#b4b4b4"></div>
<div class="t" style="left:0.5px;top:331.3px;font-size:11.2px;color:#111">Direct Serial</div>
<div class="t" style="left:98.5px;top:331.3px;font-size:11.2px;color:#111"></div>
<div class="a" style="left:0;top:344px;width:142px;height:15px;background:#cacaca"></div>
<div class="t" style="left:0.5px;top:346.2px;font-size:11.2px;color:#111">AFR</div>
<div class="t" style="left:98.5px;top:346.2px;font-size:11.2px;color:#111">29.4</div>
<div class="a" style="left:0;top:359px;width:142px;height:15px;background:#b4b4b4"></div>
<div class="t" style="left:0.5px;top:361.1px;font-size:11.2px;color:#111">AFR.ADJ</div>
<div class="t" style="left:98.5px;top:361.1px;font-size:11.2px;color:#111">20.0</div>
<div class="a" style="left:0;top:374px;width:142px;height:15px;background:#cacaca"></div>
<div class="t" style="left:0.5px;top:376.1px;font-size:11.2px;color:#111">AFR.CMD</div>
<div class="t" style="left:98.5px;top:376.1px;font-size:11.2px;color:#111">14.7</div>
<div class="a" style="left:0;top:389px;width:142px;height:15px;background:#b4b4b4"></div>
<div class="t" style="left:0.5px;top:391.0px;font-size:11.2px;color:#111">Fuel Stat</div>
<div class="t" style="left:98.5px;top:391.0px;font-size:11.2px;color:#111">0</div>
<div class="a" style="left:0;top:404px;width:142px;height:15px;background:#cacaca"></div>
<div class="t" style="left:0.5px;top:405.9px;font-size:11.2px;color:#111">Short Term Trim</div>
<div class="t" style="left:98.5px;top:405.9px;font-size:11.2px;color:#111">0</div>
<div class="a" style="left:0;top:419px;width:142px;height:15px;background:#b4b4b4"></div>
<div class="t" style="left:0.5px;top:420.8px;font-size:11.2px;color:#111">Long Term Trim</div>
<div class="t" style="left:98.5px;top:420.8px;font-size:11.2px;color:#111">-11.72</div>
<div class="a" style="left:0;top:434px;width:142px;height:15px;background:#cacaca"></div>
<div class="t" style="left:0.5px;top:435.8px;font-size:11.2px;color:#111">ECT</div>
<div class="t" style="left:98.5px;top:435.8px;font-size:11.2px;color:#111">73</div>
</div>
<div class="a" style="left:990px;top:137px;width:14px;height:450px;background:#f0f0f0"></div>
<div class="a" style="left:990px;top:153px;width:14px;height:15px;background:#cdcdcd"></div>
<svg class="a" style="left:993px;top:142px" width="9" height="6"><path d="M1 5l3.5-3.5L8 5" stroke="#444" stroke-width="1.4" fill="none"/></svg>
<svg class="a" style="left:993px;top:575px" width="9" height="6"><path d="M1 1l3.5 3.5L8 1" stroke="#444" stroke-width="1.4" fill="none"/></svg>
<div class="a" style="left:158px;top:269px;width:10px;height:8px;background:#e8101a"></div>
<div class="a" style="left:158px;top:277px;width:1px;height:15px;background:#f4d0d0"></div>
<div class="a" style="left:158px;top:293px;width:15px;height:316px;background:linear-gradient(90deg,#fff,#e8e8e8)"></div>
<div class="a" style="left:173px;top:267px;width:648px;height:23px;border:1px solid #b8b8b8;background:linear-gradient(#f6f6f6,#e4e4e4 50%,#eaeaea)"></div>
<div class="a" style="left:173px;top:290px;width:648px;height:320px;border-bottom:1px solid #dedede;border-right:1px solid #ececec"></div>
<div class="a" style="left:816px;top:603px;width:5px;height:5px;background:#111"></div>
<div class="a" style="left:181px;top:270px;width:27px;height:16px;border:1px solid #c8c8c8;background:#e8e8e8"></div>
<div class="a" style="left:183px;top:272px;width:16px;height:12px;background:linear-gradient(#7aa0c8 0,#7aa0c8 2px,#d8d8d8 2px,#a8a8a8)"></div>
<svg class="a" style="left:201px;top:275px" width="5" height="6"><path d="M0 0l4 3-4 3z" fill="#111"/></svg>
<div class="a" style="left:213px;top:270px;width:43px;height:18px;background:#d4d4d4;border:1px solid #cacaca"></div>
<div class="t" style="left:217px;top:274px;font-size:10.5px;color:#999">0</div>
<svg class="a" style="left:242px;top:276px" width="9" height="6"><path d="M1 1l3.5 3.5L8 1" stroke="#aaa" stroke-width="1.2" fill="none"/></svg>
<div class="a" style="left:260px;top:270px;width:9px;height:8px;background:#dedede;border:1px solid #ccc"></div>
<div class="a" style="left:260px;top:279px;width:9px;height:8px;background:#dedede;border:1px solid #ccc"></div>
<div class="a" style="left:275px;top:270px;width:18px;height:17px;background:#cce4f7;border:1px solid #a8cbe8"></div>
<div class="t" style="left:280.5px;top:274.5px;font-size:9.5px;font-weight:bold;color:#111">L</div>
<div class="a" style="left:295px;top:270px;width:16px;height:17px;background:#e6e6e6;border:1px solid #c4c4c4"></div>
<div class="t" style="left:299px;top:274.5px;font-size:9.5px;font-weight:bold;color:#111">H</div>
<div class="a" style="left:319px;top:270px;width:1px;height:17px;background:#b8b8b8"></div>
<div class="a" style="left:540px;top:270px;width:1px;height:17px;background:#b8b8b8"></div>
<svg class="a" style="left:332px;top:271px" width="16" height="16"><path d="M8 2v12M2 8h12" stroke="#1860c0" stroke-width="3.2"/></svg>
<svg class="a" style="left:362px;top:271px" width="16" height="16"><path d="M2 8h12" stroke="#2a80d8" stroke-width="3.2"/></svg>
<svg class="a" style="left:393px;top:270px" width="14" height="18"><path d="M7 0.5L12.5 6.5 10 9l2.5 2.5L7 17.5 1.5 11.5 4 9 1.5 6.5z" fill="#1a4aa0"/><circle cx="7" cy="9" r="1.2" fill="#8ab0e8"/></svg>
<svg class="a" style="left:423px;top:271px" width="15" height="15"><rect x="0.5" y="0.5" width="14" height="14" fill="#ececec" stroke="#c4c4c4"/><path d="M1 6h13M1 9h13M1 12h13M5 3v11M10 3v11" stroke="#d0d0d0" stroke-width="0.8"/><rect x="1" y="1" width="13" height="2" fill="#6a9ad0"/><rect x="4" y="5" width="7" height="6" fill="#e04040"/></svg>
<svg class="a" style="left:453px;top:271px" width="15" height="15"><rect x="0.5" y="0.5" width="14" height="14" fill="#ececec" stroke="#c4c4c4"/><path d="M1 6h13M1 9h13M1 12h13M5 3v11M10 3v11" stroke="#d0d0d0" stroke-width="0.8"/><rect x="1" y="1" width="13" height="2" fill="#6a9ad0"/><rect x="6" y="4" width="3" height="9" fill="#d03030"/></svg>
<svg class="a" style="left:483px;top:271px" width="15" height="15"><rect x="0.5" y="0.5" width="14" height="14" fill="#ececec" stroke="#c4c4c4"/><path d="M1 6h13M1 9h13M1 12h13M5 3v11M10 3v11" stroke="#d0d0d0" stroke-width="0.8"/><rect x="1" y="1" width="13" height="2" fill="#6a9ad0"/><rect x="2" y="8" width="11" height="3" fill="#e08080"/></svg>
<svg class="a" style="left:512px;top:271px" width="16" height="14"><path d="M0.5 12.5q1-2.5 4-2.5q0.5-6 6-6.5q4.5 0 4.5 3.5q0 5.5-6 5.5z" fill="#2a68b8"/><path d="M9 8q1-2 3-1" stroke="#8ab4e8" stroke-width="0.9" fill="none"/></svg>
<svg class="a" style="left:551px;top:271px" width="15" height="15"><rect x="0.5" y="0.5" width="14" height="14" fill="#dcdcdc" stroke="#aaa"/><rect x="1" y="1" width="13" height="2" fill="#6a9ad0"/></svg>
<div class="t" style="left:580px;top:270px;font-size:17px;color:#3a70b0;font-family:'Liberation Serif',serif">&#955;</div>
<div class="t" style="left:611px;top:271px;font-size:15px;color:#2a68b0">%</div>
<div class="t" style="left:163px;top:425.5px;font-size:9.5px;color:#333">R</div>
<div class="t" style="left:163px;top:438.2px;font-size:9.5px;color:#333">P</div>
<div class="t" style="left:163px;top:450.9px;font-size:9.5px;color:#333">M</div>
<div class="a" style="left:173px;top:294.5px;width:421px;height:13px;background:linear-gradient(90deg,rgba(255,255,255,0.75),rgba(255,255,255,0) 85%),linear-gradient(#ececec,#c4c4c4)"></div>
<div class="t" style="left:374px;top:297.5px;font-size:9.5px;letter-spacing:0.3px;color:#111;-webkit-text-stroke:0.2px #111">Load</div>
<div class="a" style="left:173px;top:307px;width:422px;height:298px;background:#fff;border-top:1px solid #a0a0a0;border-left:1px solid #a0a0a0"></div>
<div class="a" style="left:594px;top:307px;width:1px;height:18px;background:#a0a0a0"></div>
<div class="a" style="left:174px;top:308px;width:406px;height:283px;overflow:hidden">
<div class="a" style="left:93.4px;top:0;width:1px;height:17px;background:#ececec"></div>
<div class="t" style="left:66.0px;top:2.6px;width:28.2px;text-align:center;font-size:11.4px;font-weight:bold;color:#000">24.1</div>
<div class="a" style="left:121.6px;top:0;width:1px;height:17px;background:#ececec"></div>
<div class="t" style="left:94.2px;top:2.6px;width:28.2px;text-align:center;font-size:11.4px;font-weight:bold;color:#000">18.3</div>
<div class="a" style="left:149.8px;top:0;width:1px;height:17px;background:#ececec"></div>
<div class="t" style="left:122.4px;top:2.6px;width:28.2px;text-align:center;font-size:11.4px;font-weight:bold;color:#000">14.4</div>
<div class="a" style="left:178.0px;top:0;width:1px;height:17px;background:#ececec"></div>
<div class="t" style="left:150.6px;top:2.6px;width:28.2px;text-align:center;font-size:11.4px;font-weight:bold;color:#000">12.4</div>
<div class="a" style="left:206.2px;top:0;width:1px;height:17px;background:#ececec"></div>
<div class="t" style="left:178.8px;top:2.6px;width:28.2px;text-align:center;font-size:11.4px;font-weight:bold;color:#000">10.5</div>
<div class="a" style="left:234.4px;top:0;width:1px;height:17px;background:#ececec"></div>
<div class="t" style="left:207.0px;top:2.6px;width:28.2px;text-align:center;font-size:11.4px;font-weight:bold;color:#000">8.6</div>
<div class="a" style="left:262.6px;top:0;width:1px;height:17px;background:#ececec"></div>
<div class="t" style="left:235.2px;top:2.6px;width:28.2px;text-align:center;font-size:11.4px;font-weight:bold;color:#000">6.6</div>
<div class="a" style="left:290.8px;top:0;width:1px;height:17px;background:#ececec"></div>
<div class="t" style="left:263.4px;top:2.6px;width:28.2px;text-align:center;font-size:11.4px;font-weight:bold;color:#000">2.7</div>
<div class="a" style="left:319.0px;top:0;width:1px;height:17px;background:#ececec"></div>
<div class="t" style="left:291.6px;top:2.6px;width:28.2px;text-align:center;font-size:11.4px;font-weight:bold;color:#000">0.6</div>
<div class="a" style="left:347.2px;top:0;width:1px;height:17px;background:#ececec"></div>
<div class="t" style="left:319.8px;top:2.6px;width:28.2px;text-align:center;font-size:11.4px;font-weight:bold;color:#000">2.5</div>
<div class="a" style="left:375.4px;top:0;width:1px;height:17px;background:#ececec"></div>
<div class="t" style="left:348.0px;top:2.6px;width:28.2px;text-align:center;font-size:11.4px;font-weight:bold;color:#000">4.4</div>
<div class="a" style="left:403.6px;top:0;width:1px;height:17px;background:#ececec"></div>
<div class="t" style="left:376.2px;top:2.6px;width:28.2px;text-align:center;font-size:11.4px;font-weight:bold;color:#000">6.3</div>
<div class="a" style="left:0;top:17.5px;width:66px;height:14px;border-bottom:1px solid #a8a8a8"></div>
<div class="t" style="left:1.5px;top:18.7px;font-size:10.8px;letter-spacing:-0.2px;color:#111">500</div>
<div class="a" style="left:65.7px;top:17.5px;width:366.6px;height:14px;background:linear-gradient(90deg,#f08270 0.0px 28.2px, #c9b0a7 28.2px 56.4px, #a2c8c4 56.4px 84.6px, #98d0d0 84.6px 112.8px, #80dce0 112.8px 141.0px, #70e0e8 141.0px 169.2px, #65e2ea 169.2px 197.4px, #5ae4ec 197.4px 225.6px, #52e5ed 225.6px 253.8px, #4be6ee 253.8px 282.0px, #45e7ef 282.0px 310.2px, #40e8f0 310.2px 338.4px, #40e8f0 338.4px 366.6px)"></div>
<div class="t" style="left:405.3px;top:18.7px;font-size:10.9px;letter-spacing:-0.3px;color:#000"><span style="letter-spacing:-0.6px">-</span>18.9</div>
<div class="t" style="left:66.9px;top:18.7px;font-size:10.9px;letter-spacing:-0.3px;color:#000;-webkit-text-stroke:0.15px #000">33.5</div>
<div class="t" style="left:95.1px;top:18.7px;font-size:10.9px;letter-spacing:-0.3px;color:#000;-webkit-text-stroke:0.15px #000">18.2</div>
<div class="t" style="left:123.3px;top:18.7px;font-size:10.9px;letter-spacing:-0.3px;color:#000;-webkit-text-stroke:0.15px #000">8.0</div>
<div class="t" style="left:151.5px;top:18.7px;font-size:10.9px;letter-spacing:-0.3px;color:#000;-webkit-text-stroke:0.15px #000">3.5</div>
<div class="t" style="left:179.7px;top:18.7px;font-size:10.9px;letter-spacing:-0.3px;color:#000;-webkit-text-stroke:0.15px #000"><span style="letter-spacing:-0.6px">-</span>1.0</div>
<div class="t" style="left:207.9px;top:18.7px;font-size:10.9px;letter-spacing:-0.3px;color:#000;-webkit-text-stroke:0.15px #000"><span style="letter-spacing:-0.6px">-</span>4.0</div>
<div class="t" style="left:236.1px;top:18.7px;font-size:10.9px;letter-spacing:-0.3px;color:#000;-webkit-text-stroke:0.15px #000"><span style="letter-spacing:-0.6px">-</span>7.0</div>
<div class="t" style="left:264.3px;top:18.7px;font-size:10.9px;letter-spacing:-0.3px;color:#000;-webkit-text-stroke:0.15px #000"><span style="letter-spacing:-0.6px">-</span>10.0</div>
<div class="t" style="left:292.5px;top:18.7px;font-size:10.9px;letter-spacing:-0.3px;color:#000;-webkit-text-stroke:0.15px #000"><span style="letter-spacing:-0.6px">-</span>12.1</div>
<div class="t" style="left:320.7px;top:18.7px;font-size:10.9px;letter-spacing:-0.3px;color:#000;-webkit-text-stroke:0.15px #000"><span style="letter-spacing:-0.6px">-</span>13.9</div>
<div class="t" style="left:348.9px;top:18.7px;font-size:10.9px;letter-spacing:-0.3px;color:#000;-webkit-text-stroke:0.15px #000"><span style="letter-spacing:-0.6px">-</span>15.7</div>
<div class="t" style="left:377.1px;top:18.7px;font-size:10.9px;letter-spacing:-0.3px;color:#000;-webkit-text-stroke:0.15px #000"><span style="letter-spacing:-0.6px">-</span>17.0</div>
<div class="a" style="left:0;top:31.5px;width:66px;height:14px;border-bottom:1px solid #a8a8a8"></div>
<div class="t" style="left:1.5px;top:32.7px;font-size:10.8px;letter-spacing:-0.2px;color:#111">650</div>
<div class="a" style="left:65.7px;top:31.5px;width:366.6px;height:14px;background:linear-gradient(90deg,#f07e6a 0.0px 28.2px, #d0aba0 28.2px 56.4px, #aac4c0 56.4px 84.6px, #9ccccb 84.6px 112.8px, #88d8dc 112.8px 141.0px, #7bdde3 141.0px 169.2px, #6ce1e9 169.2px 197.4px, #61e2ea 197.4px 225.6px, #59e4ec 225.6px 253.8px, #52e5ed 253.8px 282.0px, #4be6ee 282.0px 310.2px, #46e7ef 310.2px 338.4px, #40e8f0 338.4px 366.6px)"></div>
<div class="t" style="left:405.3px;top:32.7px;font-size:10.9px;letter-spacing:-0.3px;color:#000"><span style="letter-spacing:-0.6px">-</span>17.2</div>
<div class="t" style="left:66.9px;top:32.7px;font-size:10.9px;letter-spacing:-0.3px;color:#000;-webkit-text-stroke:0.15px #000">36.0</div>
<div class="t" style="left:95.1px;top:32.7px;font-size:10.9px;letter-spacing:-0.3px;color:#000;-webkit-text-stroke:0.15px #000">20.4</div>
<div class="t" style="left:123.3px;top:32.7px;font-size:10.9px;letter-spacing:-0.3px;color:#000;-webkit-text-stroke:0.15px #000">10.0</div>
<div class="t" style="left:151.5px;top:32.7px;font-size:10.9px;letter-spacing:-0.3px;color:#000;-webkit-text-stroke:0.15px #000">5.5</div>
<div class="t" style="left:179.7px;top:32.7px;font-size:10.9px;letter-spacing:-0.3px;color:#000;-webkit-text-stroke:0.15px #000">1.0</div>
<div class="t" style="left:207.9px;top:32.7px;font-size:10.9px;letter-spacing:-0.3px;color:#000;-webkit-text-stroke:0.15px #000"><span style="letter-spacing:-0.6px">-</span>2.0</div>
<div class="t" style="left:236.1px;top:32.7px;font-size:10.9px;letter-spacing:-0.3px;color:#000;-webkit-text-stroke:0.15px #000"><span style="letter-spacing:-0.6px">-</span>5.0</div>
<div class="t" style="left:264.3px;top:32.7px;font-size:10.9px;letter-spacing:-0.3px;color:#000;-webkit-text-stroke:0.15px #000"><span style="letter-spacing:-0.6px">-</span>8.0</div>
<div class="t" style="left:292.5px;top:32.7px;font-size:10.9px;letter-spacing:-0.3px;color:#000;-webkit-text-stroke:0.15px #000"><span style="letter-spacing:-0.6px">-</span>10.3</div>
<div class="t" style="left:320.7px;top:32.7px;font-size:10.9px;letter-spacing:-0.3px;color:#000;-webkit-text-stroke:0.15px #000"><span style="letter-spacing:-0.6px">-</span>12.2</div>
<div class="t" style="left:348.9px;top:32.7px;font-size:10.9px;letter-spacing:-0.3px;color:#000;-webkit-text-stroke:0.15px #000"><span style="letter-spacing:-0.6px">-</span>14.1</div>
<div class="t" style="left:377.1px;top:32.7px;font-size:10.9px;letter-spacing:-0.3px;color:#000;-webkit-text-stroke:0.15px #000"><span style="letter-spacing:-0.6px">-</span>15.4</div>
<div class="a" style="left:0;top:45.5px;width:66px;height:14px;border-bottom:1px solid #a8a8a8"></div>
<div class="t" style="left:1.5px;top:46.7px;font-size:10.8px;letter-spacing:-0.2px;color:#111">750</div>
<div class="a" style="left:65.7px;top:45.5px;width:366.6px;height:14px;background:linear-gradient(90deg,#f07a66 0.0px 28.2px, #d9a698 28.2px 56.4px, #b7bbb7 56.4px 84.6px, #a1c9c5 84.6px 112.8px, #95d2d2 112.8px 141.0px, #84dade 141.0px 169.2px, #75dfe5 169.2px 197.4px, #68e1e9 197.4px 225.6px, #5ee3eb 225.6px 253.8px, #57e4ec 253.8px 282.0px, #51e5ed 282.0px 310.2px, #4be6ee 310.2px 338.4px, #46e7ef 338.4px 366.6px)"></div>
<div class="t" style="left:405.3px;top:46.7px;font-size:10.9px;letter-spacing:-0.3px;color:#000"><span style="letter-spacing:-0.6px">-</span>15.6</div>
<div class="t" style="left:66.9px;top:46.7px;font-size:10.9px;letter-spacing:-0.3px;color:#000;-webkit-text-stroke:0.15px #000">38.0</div>
<div class="t" style="left:95.1px;top:46.7px;font-size:10.9px;letter-spacing:-0.3px;color:#000;-webkit-text-stroke:0.15px #000">22.4</div>
<div class="t" style="left:123.3px;top:46.7px;font-size:10.9px;letter-spacing:-0.3px;color:#000;-webkit-text-stroke:0.15px #000">12.0</div>
<div class="t" style="left:151.5px;top:46.7px;font-size:10.9px;letter-spacing:-0.3px;color:#000;-webkit-text-stroke:0.15px #000">7.5</div>
<div class="t" style="left:179.7px;top:46.7px;font-size:10.9px;letter-spacing:-0.3px;color:#000;-webkit-text-stroke:0.15px #000">3.0</div>
<div class="t" style="left:207.9px;top:46.7px;font-size:10.9px;letter-spacing:-0.3px;color:#000;-webkit-text-stroke:0.15px #000">0.0</div>
<div class="t" style="left:236.1px;top:46.7px;font-size:10.9px;letter-spacing:-0.3px;color:#000;-webkit-text-stroke:0.15px #000"><span style="letter-spacing:-0.6px">-</span>3.0</div>
<div class="t" style="left:264.3px;top:46.7px;font-size:10.9px;letter-spacing:-0.3px;color:#000;-webkit-text-stroke:0.15px #000"><span style="letter-spacing:-0.6px">-</span>6.3</div>
<div class="t" style="left:292.5px;top:46.7px;font-size:10.9px;letter-spacing:-0.3px;color:#000;-webkit-text-stroke:0.15px #000"><span style="letter-spacing:-0.6px">-</span>9.0</div>
<div class="t" style="left:320.7px;top:46.7px;font-size:10.9px;letter-spacing:-0.3px;color:#000;-webkit-text-stroke:0.15px #000"><span style="letter-spacing:-0.6px">-</span>10.8</div>
<div class="t" style="left:348.9px;top:46.7px;font-size:10.9px;letter-spacing:-0.3px;color:#000;-webkit-text-stroke:0.15px #000"><span style="letter-spacing:-0.6px">-</span>12.5</div>
<div class="t" style="left:377.1px;top:46.7px;font-size:10.9px;letter-spacing:-0.3px;color:#000;-webkit-text-stroke:0.15px #000"><span style="letter-spacing:-0.6px">-</span>13.9</div>
<div class="a" style="left:0;top:59.5px;width:66px;height:14px;border-bottom:1px solid #a8a8a8"></div>
<div class="t" style="left:1.5px;top:60.7px;font-size:10.8px;letter-spacing:-0.2px;color:#111">1000</div>
<div class="a" style="left:65.7px;top:59.5px;width:366.6px;height:14px;background:linear-gradient(90deg,#f05030 0.0px 28.2px, #f07e6b 28.2px 56.4px, #e1a192 56.4px 84.6px, #d0aba0 84.6px 112.8px, #c5b2ab 112.8px 141.0px, #bfb5b1 141.0px 169.2px, #aac4c0 169.2px 197.4px, #99cfcf 197.4px 225.6px, #84dade 225.6px 253.8px, #7cdde2 253.8px 282.0px, #73dfe7 282.0px 310.2px, #6ae1e9 310.2px 338.4px, #65e2ea 338.4px 366.6px)"></div>
<div class="t" style="left:405.3px;top:60.7px;font-size:10.9px;letter-spacing:-0.3px;color:#000"><span style="letter-spacing:-0.6px">-</span>7.4</div>
<div class="t" style="left:66.9px;top:60.7px;font-size:10.9px;letter-spacing:-0.3px;color:#000;-webkit-text-stroke:0.15px #000">55.0</div>
<div class="t" style="left:95.1px;top:60.7px;font-size:10.9px;letter-spacing:-0.3px;color:#000;-webkit-text-stroke:0.15px #000">35.8</div>
<div class="t" style="left:123.3px;top:60.7px;font-size:10.9px;letter-spacing:-0.3px;color:#000;-webkit-text-stroke:0.15px #000">24.0</div>
<div class="t" style="left:151.5px;top:60.7px;font-size:10.9px;letter-spacing:-0.3px;color:#000;-webkit-text-stroke:0.15px #000">20.3</div>
<div class="t" style="left:179.7px;top:60.7px;font-size:10.9px;letter-spacing:-0.3px;color:#000;-webkit-text-stroke:0.15px #000">16.5</div>
<div class="t" style="left:207.9px;top:60.7px;font-size:10.9px;letter-spacing:-0.3px;color:#000;-webkit-text-stroke:0.15px #000">13.5</div>
<div class="t" style="left:236.1px;top:60.7px;font-size:10.9px;letter-spacing:-0.3px;color:#000;-webkit-text-stroke:0.15px #000">10.0</div>
<div class="t" style="left:264.3px;top:60.7px;font-size:10.9px;letter-spacing:-0.3px;color:#000;-webkit-text-stroke:0.15px #000">4.0</div>
<div class="t" style="left:292.5px;top:60.7px;font-size:10.9px;letter-spacing:-0.3px;color:#000;-webkit-text-stroke:0.15px #000">0.0</div>
<div class="t" style="left:320.7px;top:60.7px;font-size:10.9px;letter-spacing:-0.3px;color:#000;-webkit-text-stroke:0.15px #000"><span style="letter-spacing:-0.6px">-</span>1.8</div>
<div class="t" style="left:348.9px;top:60.7px;font-size:10.9px;letter-spacing:-0.3px;color:#000;-webkit-text-stroke:0.15px #000"><span style="letter-spacing:-0.6px">-</span>3.5</div>
<div class="t" style="left:377.1px;top:60.7px;font-size:10.9px;letter-spacing:-0.3px;color:#000;-webkit-text-stroke:0.15px #000"><span style="letter-spacing:-0.6px">-</span>5.5</div>
<div class="a" style="left:0;top:73.5px;width:66px;height:14px;border-bottom:1px solid #a8a8a8"></div>
<div class="t" style="left:1.5px;top:74.7px;font-size:10.8px;letter-spacing:-0.2px;color:#111">1250</div>
<div class="a" style="left:65.7px;top:73.5px;width:366.6px;height:14px;background:linear-gradient(90deg,#f4381c 0.0px 28.2px, #f06d55 28.2px 56.4px, #f07e6a 56.4px 84.6px, #ec8e7c 84.6px 112.8px, #e4a090 112.8px 141.0px, #cbaea5 141.0px 169.2px, #beb6b2 169.2px 197.4px, #a0cac7 197.4px 225.6px, #99cfcf 225.6px 253.8px, #8ed5d8 253.8px 282.0px, #84dade 282.0px 310.2px, #7adee3 310.2px 338.4px, #72e0e7 338.4px 366.6px)"></div>
<div class="t" style="left:405.3px;top:74.7px;font-size:10.9px;letter-spacing:-0.3px;color:#000"><span style="letter-spacing:-0.6px">-</span>4.2</div>
<div class="t" style="left:66.9px;top:74.7px;font-size:10.9px;letter-spacing:-0.3px;color:#000;-webkit-text-stroke:0.15px #000">64.0</div>
<div class="t" style="left:95.1px;top:74.7px;font-size:10.9px;letter-spacing:-0.3px;color:#000;-webkit-text-stroke:0.15px #000">46.4</div>
<div class="t" style="left:123.3px;top:74.7px;font-size:10.9px;letter-spacing:-0.3px;color:#000;-webkit-text-stroke:0.15px #000">36.0</div>
<div class="t" style="left:151.5px;top:74.7px;font-size:10.9px;letter-spacing:-0.3px;color:#000;-webkit-text-stroke:0.15px #000">30.0</div>
<div class="t" style="left:179.7px;top:74.7px;font-size:10.9px;letter-spacing:-0.3px;color:#000;-webkit-text-stroke:0.15px #000">24.5</div>
<div class="t" style="left:207.9px;top:74.7px;font-size:10.9px;letter-spacing:-0.3px;color:#000;-webkit-text-stroke:0.15px #000">19.0</div>
<div class="t" style="left:236.1px;top:74.7px;font-size:10.9px;letter-spacing:-0.3px;color:#000;-webkit-text-stroke:0.15px #000">13.0</div>
<div class="t" style="left:264.3px;top:74.7px;font-size:10.9px;letter-spacing:-0.3px;color:#000;-webkit-text-stroke:0.15px #000">6.9</div>
<div class="t" style="left:292.5px;top:74.7px;font-size:10.9px;letter-spacing:-0.3px;color:#000;-webkit-text-stroke:0.15px #000">3.9</div>
<div class="t" style="left:320.7px;top:74.7px;font-size:10.9px;letter-spacing:-0.3px;color:#000;-webkit-text-stroke:0.15px #000">1.9</div>
<div class="t" style="left:348.9px;top:74.7px;font-size:10.9px;letter-spacing:-0.3px;color:#000;-webkit-text-stroke:0.15px #000"><span style="letter-spacing:-0.6px">-</span>0.1</div>
<div class="t" style="left:377.1px;top:74.7px;font-size:10.9px;letter-spacing:-0.3px;color:#000;-webkit-text-stroke:0.15px #000"><span style="letter-spacing:-0.6px">-</span>2.2</div>
<div class="a" style="left:0;top:87.5px;width:66px;height:14px;border-bottom:1px solid #a8a8a8"></div>
<div class="t" style="left:1.5px;top:88.7px;font-size:10.8px;letter-spacing:-0.2px;color:#111">1500</div>
<div class="a" style="left:65.7px;top:87.5px;width:366.6px;height:14px;background:linear-gradient(90deg,#f02c13 0.0px 28.2px, #f06448 28.2px 56.4px, #f07c67 56.4px 84.6px, #ed8a78 84.6px 112.8px, #e69d8d 112.8px 141.0px, #ceada2 141.0px 169.2px, #c2b3ae 169.2px 197.4px, #a8c5c1 197.4px 225.6px, #9ccccb 225.6px 253.8px, #92d3d5 253.8px 282.0px, #84dade 282.0px 310.2px, #7cdde2 310.2px 338.4px, #74dfe6 338.4px 366.6px)"></div>
<div class="t" style="left:405.3px;top:88.7px;font-size:10.9px;letter-spacing:-0.3px;color:#000"><span style="letter-spacing:-0.6px">-</span>3.5</div>
<div class="t" style="left:66.9px;top:88.7px;font-size:10.9px;letter-spacing:-0.3px;color:#000;-webkit-text-stroke:0.15px #000">68.0</div>
<div class="t" style="left:95.1px;top:88.7px;font-size:10.9px;letter-spacing:-0.3px;color:#000;-webkit-text-stroke:0.15px #000">50.0</div>
<div class="t" style="left:123.3px;top:88.7px;font-size:10.9px;letter-spacing:-0.3px;color:#000;-webkit-text-stroke:0.15px #000">37.3</div>
<div class="t" style="left:151.5px;top:88.7px;font-size:10.9px;letter-spacing:-0.3px;color:#000;-webkit-text-stroke:0.15px #000">31.2</div>
<div class="t" style="left:179.7px;top:88.7px;font-size:10.9px;letter-spacing:-0.3px;color:#000;-webkit-text-stroke:0.15px #000">25.2</div>
<div class="t" style="left:207.9px;top:88.7px;font-size:10.9px;letter-spacing:-0.3px;color:#000;-webkit-text-stroke:0.15px #000">19.7</div>
<div class="t" style="left:236.1px;top:88.7px;font-size:10.9px;letter-spacing:-0.3px;color:#000;-webkit-text-stroke:0.15px #000">15.2</div>
<div class="t" style="left:264.3px;top:88.7px;font-size:10.9px;letter-spacing:-0.3px;color:#000;-webkit-text-stroke:0.15px #000">9.5</div>
<div class="t" style="left:292.5px;top:88.7px;font-size:10.9px;letter-spacing:-0.3px;color:#000;-webkit-text-stroke:0.15px #000">5.5</div>
<div class="t" style="left:320.7px;top:88.7px;font-size:10.9px;letter-spacing:-0.3px;color:#000;-webkit-text-stroke:0.15px #000">2.5</div>
<div class="t" style="left:348.9px;top:88.7px;font-size:10.9px;letter-spacing:-0.3px;color:#000;-webkit-text-stroke:0.15px #000">0.0</div>
<div class="t" style="left:377.1px;top:88.7px;font-size:10.9px;letter-spacing:-0.3px;color:#000;-webkit-text-stroke:0.15px #000"><span style="letter-spacing:-0.6px">-</span>1.8</div>
<div class="a" style="left:0;top:101.5px;width:66px;height:14px;border-bottom:1px solid #a8a8a8"></div>
<div class="t" style="left:1.5px;top:102.7px;font-size:10.8px;letter-spacing:-0.2px;color:#111">1750</div>
<div class="a" style="left:65.7px;top:101.5px;width:366.6px;height:14px;background:linear-gradient(90deg,#ee240e 0.0px 28.2px, #f05c3f 28.2px 56.4px, #f07964 56.4px 84.6px, #ef8574 84.6px 112.8px, #e79b8a 112.8px 141.0px, #cfaca1 141.0px 169.2px, #c4b2ac 169.2px 197.4px, #b1bfbb 197.4px 225.6px, #a1c9c5 225.6px 253.8px, #9bcecd 253.8px 282.0px, #92d3d5 282.0px 310.2px, #87d9dd 310.2px 338.4px, #81dce0 338.4px 366.6px)"></div>
<div class="t" style="left:405.3px;top:102.7px;font-size:10.9px;letter-spacing:-0.3px;color:#000"><span style="letter-spacing:-0.6px">-</span>1.1</div>
<div class="t" style="left:66.9px;top:102.7px;font-size:10.9px;letter-spacing:-0.3px;color:#000;-webkit-text-stroke:0.15px #000">70.3</div>
<div class="t" style="left:95.1px;top:102.7px;font-size:10.9px;letter-spacing:-0.3px;color:#000;-webkit-text-stroke:0.15px #000">51.9</div>
<div class="t" style="left:123.3px;top:102.7px;font-size:10.9px;letter-spacing:-0.3px;color:#000;-webkit-text-stroke:0.15px #000">39.0</div>
<div class="t" style="left:151.5px;top:102.7px;font-size:10.9px;letter-spacing:-0.3px;color:#000;-webkit-text-stroke:0.15px #000">32.5</div>
<div class="t" style="left:179.7px;top:102.7px;font-size:10.9px;letter-spacing:-0.3px;color:#000;-webkit-text-stroke:0.15px #000">26.0</div>
<div class="t" style="left:207.9px;top:102.7px;font-size:10.9px;letter-spacing:-0.3px;color:#000;-webkit-text-stroke:0.15px #000">20.0</div>
<div class="t" style="left:236.1px;top:102.7px;font-size:10.9px;letter-spacing:-0.3px;color:#000;-webkit-text-stroke:0.15px #000">16.0</div>
<div class="t" style="left:264.3px;top:102.7px;font-size:10.9px;letter-spacing:-0.3px;color:#000;-webkit-text-stroke:0.15px #000">11.0</div>
<div class="t" style="left:292.5px;top:102.7px;font-size:10.9px;letter-spacing:-0.3px;color:#000;-webkit-text-stroke:0.15px #000">7.5</div>
<div class="t" style="left:320.7px;top:102.7px;font-size:10.9px;letter-spacing:-0.3px;color:#000;-webkit-text-stroke:0.15px #000">4.8</div>
<div class="t" style="left:348.9px;top:102.7px;font-size:10.9px;letter-spacing:-0.3px;color:#000;-webkit-text-stroke:0.15px #000">2.5</div>
<div class="t" style="left:377.1px;top:102.7px;font-size:10.9px;letter-spacing:-0.3px;color:#000;-webkit-text-stroke:0.15px #000">0.7</div>
<div class="a" style="left:0;top:115.5px;width:66px;height:14px;border-bottom:1px solid #a8a8a8"></div>
<div class="t" style="left:1.5px;top:116.7px;font-size:10.8px;letter-spacing:-0.2px;color:#111">2000</div>
<div class="a" style="left:65.7px;top:115.5px;width:366.6px;height:14px;background:linear-gradient(90deg,#ee220c 0.0px 28.2px, #f05a3c 28.2px 56.4px, #f07762 56.4px 84.6px, #ef8472 84.6px 112.8px, #e89787 112.8px 141.0px, #d2aa9e 141.0px 169.2px, #c6b1aa 169.2px 197.4px, #b7bbb7 197.4px 225.6px, #a4c7c3 225.6px 253.8px, #9eccc9 253.8px 282.0px, #98d0d0 282.0px 310.2px, #8bd6da 310.2px 338.4px, #84dade 338.4px 366.6px)"></div>
<div class="t" style="left:405.3px;top:116.7px;font-size:10.9px;letter-spacing:-0.3px;color:#000"><span style="letter-spacing:-0.6px">-</span>0.1</div>
<div class="t" style="left:66.9px;top:116.7px;font-size:10.9px;letter-spacing:-0.3px;color:#000;-webkit-text-stroke:0.15px #000">71.0</div>
<div class="t" style="left:95.1px;top:116.7px;font-size:10.9px;letter-spacing:-0.3px;color:#000;-webkit-text-stroke:0.15px #000">52.5</div>
<div class="t" style="left:123.3px;top:116.7px;font-size:10.9px;letter-spacing:-0.3px;color:#000;-webkit-text-stroke:0.15px #000">40.0</div>
<div class="t" style="left:151.5px;top:116.7px;font-size:10.9px;letter-spacing:-0.3px;color:#000;-webkit-text-stroke:0.15px #000">33.0</div>
<div class="t" style="left:179.7px;top:116.7px;font-size:10.9px;letter-spacing:-0.3px;color:#000;-webkit-text-stroke:0.15px #000">27.0</div>
<div class="t" style="left:207.9px;top:116.7px;font-size:10.9px;letter-spacing:-0.3px;color:#000;-webkit-text-stroke:0.15px #000">21.0</div>
<div class="t" style="left:236.1px;top:116.7px;font-size:10.9px;letter-spacing:-0.3px;color:#000;-webkit-text-stroke:0.15px #000">17.0</div>
<div class="t" style="left:264.3px;top:116.7px;font-size:10.9px;letter-spacing:-0.3px;color:#000;-webkit-text-stroke:0.15px #000">12.0</div>
<div class="t" style="left:292.5px;top:116.7px;font-size:10.9px;letter-spacing:-0.3px;color:#000;-webkit-text-stroke:0.15px #000">8.5</div>
<div class="t" style="left:320.7px;top:116.7px;font-size:10.9px;letter-spacing:-0.3px;color:#000;-webkit-text-stroke:0.15px #000">6.0</div>
<div class="t" style="left:348.9px;top:116.7px;font-size:10.9px;letter-spacing:-0.3px;color:#000;-webkit-text-stroke:0.15px #000">3.5</div>
<div class="t" style="left:377.1px;top:116.7px;font-size:10.9px;letter-spacing:-0.3px;color:#000;-webkit-text-stroke:0.15px #000">1.5</div>
<div class="a" style="left:0;top:129.5px;width:66px;height:14px;border-bottom:1px solid #a8a8a8"></div>
<div class="t" style="left:1.5px;top:130.7px;font-size:10.8px;letter-spacing:-0.2px;color:#111">2250</div>
<div class="a" style="left:65.7px;top:129.5px;width:366.6px;height:14px;background:linear-gradient(90deg,#ee210c 0.0px 28.2px, #f0583a 28.2px 56.4px, #f0745e 56.4px 84.6px, #f07e6b 84.6px 112.8px, #ec8e7d 112.8px 141.0px, #e79b8a 141.0px 169.2px, #d0aba0 169.2px 197.4px, #c4b2ac 197.4px 225.6px, #afc0bc 225.6px 253.8px, #a1c9c5 253.8px 282.0px, #9bcdcc 282.0px 310.2px, #97d1d1 310.2px 338.4px, #8dd5d8 338.4px 366.6px)"></div>
<div class="t" style="left:405.3px;top:130.7px;font-size:10.9px;letter-spacing:-0.3px;color:#000">1.4</div>
<div class="t" style="left:66.9px;top:130.7px;font-size:10.9px;letter-spacing:-0.3px;color:#000;-webkit-text-stroke:0.15px #000">71.3</div>
<div class="t" style="left:95.1px;top:130.7px;font-size:10.9px;letter-spacing:-0.3px;color:#000;-webkit-text-stroke:0.15px #000">53.0</div>
<div class="t" style="left:123.3px;top:130.7px;font-size:10.9px;letter-spacing:-0.3px;color:#000;-webkit-text-stroke:0.15px #000">42.0</div>
<div class="t" style="left:151.5px;top:130.7px;font-size:10.9px;letter-spacing:-0.3px;color:#000;-webkit-text-stroke:0.15px #000">35.9</div>
<div class="t" style="left:179.7px;top:130.7px;font-size:10.9px;letter-spacing:-0.3px;color:#000;-webkit-text-stroke:0.15px #000">29.8</div>
<div class="t" style="left:207.9px;top:130.7px;font-size:10.9px;letter-spacing:-0.3px;color:#000;-webkit-text-stroke:0.15px #000">26.0</div>
<div class="t" style="left:236.1px;top:130.7px;font-size:10.9px;letter-spacing:-0.3px;color:#000;-webkit-text-stroke:0.15px #000">20.3</div>
<div class="t" style="left:264.3px;top:130.7px;font-size:10.9px;letter-spacing:-0.3px;color:#000;-webkit-text-stroke:0.15px #000">16.0</div>
<div class="t" style="left:292.5px;top:130.7px;font-size:10.9px;letter-spacing:-0.3px;color:#000;-webkit-text-stroke:0.15px #000">10.8</div>
<div class="t" style="left:320.7px;top:130.7px;font-size:10.9px;letter-spacing:-0.3px;color:#000;-webkit-text-stroke:0.15px #000">7.7</div>
<div class="t" style="left:348.9px;top:130.7px;font-size:10.9px;letter-spacing:-0.3px;color:#000;-webkit-text-stroke:0.15px #000">5.0</div>
<div class="t" style="left:377.1px;top:130.7px;font-size:10.9px;letter-spacing:-0.3px;color:#000;-webkit-text-stroke:0.15px #000">3.3</div>
<div class="a" style="left:0;top:143.5px;width:66px;height:14px;border-bottom:1px solid #a8a8a8"></div>
<div class="t" style="left:1.5px;top:144.7px;font-size:10.8px;letter-spacing:-0.2px;color:#111">2500</div>
<div class="a" style="left:65.7px;top:143.5px;width:366.6px;height:14px;background:linear-gradient(90deg,#ed210b 0.0px 28.2px, #f05637 28.2px 56.4px, #f0735c 56.4px 84.6px, #f07d69 84.6px 112.8px, #ec8c7b 112.8px 141.0px, #e99686 141.0px 169.2px, #daa698 169.2px 197.4px, #c6b1aa 197.4px 225.6px, #b7bbb7 225.6px 253.8px, #a5c6c2 253.8px 282.0px, #9fcbc8 282.0px 310.2px, #9bcdcc 310.2px 338.4px, #98d0d0 338.4px 366.6px)"></div>
<div class="t" style="left:405.3px;top:144.7px;font-size:10.9px;letter-spacing:-0.3px;color:#000">2.9</div>
<div class="t" style="left:66.9px;top:144.7px;font-size:10.9px;letter-spacing:-0.3px;color:#000;-webkit-text-stroke:0.15px #000">71.5</div>
<div class="t" style="left:95.1px;top:144.7px;font-size:10.9px;letter-spacing:-0.3px;color:#000;-webkit-text-stroke:0.15px #000">53.6</div>
<div class="t" style="left:123.3px;top:144.7px;font-size:10.9px;letter-spacing:-0.3px;color:#000;-webkit-text-stroke:0.15px #000">43.0</div>
<div class="t" style="left:151.5px;top:144.7px;font-size:10.9px;letter-spacing:-0.3px;color:#000;-webkit-text-stroke:0.15px #000">36.5</div>
<div class="t" style="left:179.7px;top:144.7px;font-size:10.9px;letter-spacing:-0.3px;color:#000;-webkit-text-stroke:0.15px #000">30.5</div>
<div class="t" style="left:207.9px;top:144.7px;font-size:10.9px;letter-spacing:-0.3px;color:#000;-webkit-text-stroke:0.15px #000">27.3</div>
<div class="t" style="left:236.1px;top:144.7px;font-size:10.9px;letter-spacing:-0.3px;color:#000;-webkit-text-stroke:0.15px #000">22.5</div>
<div class="t" style="left:264.3px;top:144.7px;font-size:10.9px;letter-spacing:-0.3px;color:#000;-webkit-text-stroke:0.15px #000">17.0</div>
<div class="t" style="left:292.5px;top:144.7px;font-size:10.9px;letter-spacing:-0.3px;color:#000;-webkit-text-stroke:0.15px #000">12.0</div>
<div class="t" style="left:320.7px;top:144.7px;font-size:10.9px;letter-spacing:-0.3px;color:#000;-webkit-text-stroke:0.15px #000">8.8</div>
<div class="t" style="left:348.9px;top:144.7px;font-size:10.9px;letter-spacing:-0.3px;color:#000;-webkit-text-stroke:0.15px #000">6.5</div>
<div class="t" style="left:377.1px;top:144.7px;font-size:10.9px;letter-spacing:-0.3px;color:#000;-webkit-text-stroke:0.15px #000">5.0</div>
<div class="a" style="left:0;top:157.5px;width:66px;height:14px;border-bottom:1px solid #a8a8a8"></div>
<div class="t" style="left:1.5px;top:158.7px;font-size:10.8px;letter-spacing:-0.2px;color:#111">2750</div>
<div class="a" style="left:65.7px;top:157.5px;width:366.6px;height:14px;background:linear-gradient(90deg,#ed200b 0.0px 28.2px, #f05131 28.2px 56.4px, #f0715a 56.4px 84.6px, #f07a66 84.6px 112.8px, #ef8472 112.8px 141.0px, #eb9080 141.0px 169.2px, #e2a091 169.2px 197.4px, #c8b0a8 197.4px 225.6px, #bfb5b1 225.6px 253.8px, #abc4c0 253.8px 282.0px, #a2c8c5 282.0px 310.2px, #9ecbc9 310.2px 338.4px, #9bcecd 338.4px 366.6px)"></div>
<div class="t" style="left:405.3px;top:158.7px;font-size:10.9px;letter-spacing:-0.3px;color:#000">4.0</div>
<div class="t" style="left:66.9px;top:158.7px;font-size:10.9px;letter-spacing:-0.3px;color:#000;-webkit-text-stroke:0.15px #000">71.8</div>
<div class="t" style="left:95.1px;top:158.7px;font-size:10.9px;letter-spacing:-0.3px;color:#000;-webkit-text-stroke:0.15px #000">54.7</div>
<div class="t" style="left:123.3px;top:158.7px;font-size:10.9px;letter-spacing:-0.3px;color:#000;-webkit-text-stroke:0.15px #000">44.0</div>
<div class="t" style="left:151.5px;top:158.7px;font-size:10.9px;letter-spacing:-0.3px;color:#000;-webkit-text-stroke:0.15px #000">38.0</div>
<div class="t" style="left:179.7px;top:158.7px;font-size:10.9px;letter-spacing:-0.3px;color:#000;-webkit-text-stroke:0.15px #000">32.8</div>
<div class="t" style="left:207.9px;top:158.7px;font-size:10.9px;letter-spacing:-0.3px;color:#000;-webkit-text-stroke:0.15px #000">29.1</div>
<div class="t" style="left:236.1px;top:158.7px;font-size:10.9px;letter-spacing:-0.3px;color:#000;-webkit-text-stroke:0.15px #000">24.3</div>
<div class="t" style="left:264.3px;top:158.7px;font-size:10.9px;letter-spacing:-0.3px;color:#000;-webkit-text-stroke:0.15px #000">18.0</div>
<div class="t" style="left:292.5px;top:158.7px;font-size:10.9px;letter-spacing:-0.3px;color:#000;-webkit-text-stroke:0.15px #000">13.7</div>
<div class="t" style="left:320.7px;top:158.7px;font-size:10.9px;letter-spacing:-0.3px;color:#000;-webkit-text-stroke:0.15px #000">10.1</div>
<div class="t" style="left:348.9px;top:158.7px;font-size:10.9px;letter-spacing:-0.3px;color:#000;-webkit-text-stroke:0.15px #000">7.8</div>
<div class="t" style="left:377.1px;top:158.7px;font-size:10.9px;letter-spacing:-0.3px;color:#000;-webkit-text-stroke:0.15px #000">6.2</div>
<div class="a" style="left:0;top:171.5px;width:66px;height:14px;border-bottom:1px solid #a8a8a8"></div>
<div class="t" style="left:1.5px;top:172.7px;font-size:10.8px;letter-spacing:-0.2px;color:#111">3000</div>
<div class="a" style="left:65.7px;top:171.5px;width:366.6px;height:14px;background:linear-gradient(90deg,#ed1f0a 0.0px 28.2px, #f04e2e 28.2px 56.4px, #f07058 56.4px 84.6px, #f07863 84.6px 112.8px, #f07f6d 112.8px 141.0px, #ed8b7a 141.0px 169.2px, #e79b8a 169.2px 197.4px, #cbaea5 197.4px 225.6px, #c3b3ad 225.6px 253.8px, #b3beba 253.8px 282.0px, #a6c6c2 282.0px 310.2px, #a1c9c6 310.2px 338.4px, #9dccca 338.4px 366.6px)"></div>
<div class="t" style="left:405.3px;top:172.7px;font-size:10.9px;letter-spacing:-0.3px;color:#000">5.1</div>
<div class="t" style="left:66.9px;top:172.7px;font-size:10.9px;letter-spacing:-0.3px;color:#000;-webkit-text-stroke:0.15px #000">72.0</div>
<div class="t" style="left:95.1px;top:172.7px;font-size:10.9px;letter-spacing:-0.3px;color:#000;-webkit-text-stroke:0.15px #000">55.8</div>
<div class="t" style="left:123.3px;top:172.7px;font-size:10.9px;letter-spacing:-0.3px;color:#000;-webkit-text-stroke:0.15px #000">45.0</div>
<div class="t" style="left:151.5px;top:172.7px;font-size:10.9px;letter-spacing:-0.3px;color:#000;-webkit-text-stroke:0.15px #000">39.5</div>
<div class="t" style="left:179.7px;top:172.7px;font-size:10.9px;letter-spacing:-0.3px;color:#000;-webkit-text-stroke:0.15px #000">35.0</div>
<div class="t" style="left:207.9px;top:172.7px;font-size:10.9px;letter-spacing:-0.3px;color:#000;-webkit-text-stroke:0.15px #000">30.8</div>
<div class="t" style="left:236.1px;top:172.7px;font-size:10.9px;letter-spacing:-0.3px;color:#000;-webkit-text-stroke:0.15px #000">26.0</div>
<div class="t" style="left:264.3px;top:172.7px;font-size:10.9px;letter-spacing:-0.3px;color:#000;-webkit-text-stroke:0.15px #000">19.0</div>
<div class="t" style="left:292.5px;top:172.7px;font-size:10.9px;letter-spacing:-0.3px;color:#000;-webkit-text-stroke:0.15px #000">15.4</div>
<div class="t" style="left:320.7px;top:172.7px;font-size:10.9px;letter-spacing:-0.3px;color:#000;-webkit-text-stroke:0.15px #000">11.3</div>
<div class="t" style="left:348.9px;top:172.7px;font-size:10.9px;letter-spacing:-0.3px;color:#000;-webkit-text-stroke:0.15px #000">9.0</div>
<div class="t" style="left:377.1px;top:172.7px;font-size:10.9px;letter-spacing:-0.3px;color:#000;-webkit-text-stroke:0.15px #000">7.4</div>
<div class="a" style="left:0;top:185.5px;width:66px;height:14px;border-bottom:1px solid #a8a8a8"></div>
<div class="t" style="left:1.5px;top:186.7px;font-size:10.8px;letter-spacing:-0.2px;color:#111">3500</div>
<div class="a" style="left:65.7px;top:185.5px;width:366.6px;height:14px;background:linear-gradient(90deg,#ec1e09 0.0px 28.2px, #f14a2b 28.2px 56.4px, #f06a51 56.4px 84.6px, #f0735d 84.6px 112.8px, #f07a65 112.8px 141.0px, #f0816f 141.0px 169.2px, #eb8f7e 169.2px 197.4px, #daa698 197.4px 225.6px, #c8b0a8 225.6px 253.8px, #beb6b2 253.8px 282.0px, #a8c5c1 282.0px 310.2px, #a0c9c6 310.2px 338.4px, #9dccca 338.4px 366.6px)"></div>
<div class="t" style="left:405.3px;top:186.7px;font-size:10.9px;letter-spacing:-0.3px;color:#000">5.1</div>
<div class="t" style="left:66.9px;top:186.7px;font-size:10.9px;letter-spacing:-0.3px;color:#000;-webkit-text-stroke:0.15px #000">72.5</div>
<div class="t" style="left:95.1px;top:186.7px;font-size:10.9px;letter-spacing:-0.3px;color:#000;-webkit-text-stroke:0.15px #000">57.4</div>
<div class="t" style="left:123.3px;top:186.7px;font-size:10.9px;letter-spacing:-0.3px;color:#000;-webkit-text-stroke:0.15px #000">47.5</div>
<div class="t" style="left:151.5px;top:186.7px;font-size:10.9px;letter-spacing:-0.3px;color:#000;-webkit-text-stroke:0.15px #000">42.5</div>
<div class="t" style="left:179.7px;top:186.7px;font-size:10.9px;letter-spacing:-0.3px;color:#000;-webkit-text-stroke:0.15px #000">38.3</div>
<div class="t" style="left:207.9px;top:186.7px;font-size:10.9px;letter-spacing:-0.3px;color:#000;-webkit-text-stroke:0.15px #000">33.9</div>
<div class="t" style="left:236.1px;top:186.7px;font-size:10.9px;letter-spacing:-0.3px;color:#000;-webkit-text-stroke:0.15px #000">29.5</div>
<div class="t" style="left:264.3px;top:186.7px;font-size:10.9px;letter-spacing:-0.3px;color:#000;-webkit-text-stroke:0.15px #000">22.5</div>
<div class="t" style="left:292.5px;top:186.7px;font-size:10.9px;letter-spacing:-0.3px;color:#000;-webkit-text-stroke:0.15px #000">17.9</div>
<div class="t" style="left:320.7px;top:186.7px;font-size:10.9px;letter-spacing:-0.3px;color:#000;-webkit-text-stroke:0.15px #000">13.1</div>
<div class="t" style="left:348.9px;top:186.7px;font-size:10.9px;letter-spacing:-0.3px;color:#000;-webkit-text-stroke:0.15px #000">9.4</div>
<div class="t" style="left:377.1px;top:186.7px;font-size:10.9px;letter-spacing:-0.3px;color:#000;-webkit-text-stroke:0.15px #000">7.2</div>
<div class="a" style="left:0;top:199.5px;width:66px;height:14px;border-bottom:1px solid #a8a8a8"></div>
<div class="t" style="left:1.5px;top:200.7px;font-size:10.8px;letter-spacing:-0.2px;color:#111">4000</div>
<div class="a" style="left:65.7px;top:199.5px;width:366.6px;height:14px;background:linear-gradient(90deg,#ec1c08 0.0px 28.2px, #f24527 28.2px 56.4px, #f06448 56.4px 84.6px, #f06f57 84.6px 112.8px, #f0755f 112.8px 141.0px, #f07c68 141.0px 169.2px, #ef8472 169.2px 197.4px, #e79b8a 197.4px 225.6px, #d0aba0 225.6px 253.8px, #c5b2ab 253.8px 282.0px, #b9b9b5 282.0px 310.2px, #a0cac7 310.2px 338.4px, #9ccccb 338.4px 366.6px)"></div>
<div class="t" style="left:405.3px;top:200.7px;font-size:10.9px;letter-spacing:-0.3px;color:#000">5.2</div>
<div class="t" style="left:66.9px;top:200.7px;font-size:10.9px;letter-spacing:-0.3px;color:#000;-webkit-text-stroke:0.15px #000">73.0</div>
<div class="t" style="left:95.1px;top:200.7px;font-size:10.9px;letter-spacing:-0.3px;color:#000;-webkit-text-stroke:0.15px #000">59.0</div>
<div class="t" style="left:123.3px;top:200.7px;font-size:10.9px;letter-spacing:-0.3px;color:#000;-webkit-text-stroke:0.15px #000">50.0</div>
<div class="t" style="left:151.5px;top:200.7px;font-size:10.9px;letter-spacing:-0.3px;color:#000;-webkit-text-stroke:0.15px #000">45.5</div>
<div class="t" style="left:179.7px;top:200.7px;font-size:10.9px;letter-spacing:-0.3px;color:#000;-webkit-text-stroke:0.15px #000">41.5</div>
<div class="t" style="left:207.9px;top:200.7px;font-size:10.9px;letter-spacing:-0.3px;color:#000;-webkit-text-stroke:0.15px #000">37.0</div>
<div class="t" style="left:236.1px;top:200.7px;font-size:10.9px;letter-spacing:-0.3px;color:#000;-webkit-text-stroke:0.15px #000">33.0</div>
<div class="t" style="left:264.3px;top:200.7px;font-size:10.9px;letter-spacing:-0.3px;color:#000;-webkit-text-stroke:0.15px #000">26.0</div>
<div class="t" style="left:292.5px;top:200.7px;font-size:10.9px;letter-spacing:-0.3px;color:#000;-webkit-text-stroke:0.15px #000">20.5</div>
<div class="t" style="left:320.7px;top:200.7px;font-size:10.9px;letter-spacing:-0.3px;color:#000;-webkit-text-stroke:0.15px #000">16.5</div>
<div class="t" style="left:348.9px;top:200.7px;font-size:10.9px;letter-spacing:-0.3px;color:#000;-webkit-text-stroke:0.15px #000">12.3</div>
<div class="t" style="left:377.1px;top:200.7px;font-size:10.9px;letter-spacing:-0.3px;color:#000;-webkit-text-stroke:0.15px #000">7.0</div>
<div class="a" style="left:0;top:213.5px;width:66px;height:14px;border-bottom:1px solid #a8a8a8"></div>
<div class="t" style="left:1.5px;top:214.7px;font-size:10.8px;letter-spacing:-0.2px;color:#111">4500</div>
<div class="a" style="left:65.7px;top:213.5px;width:366.6px;height:14px;background:linear-gradient(90deg,#ec1e09 0.0px 28.2px, #f14829 28.2px 56.4px, #f0664c 56.4px 84.6px, #f07058 84.6px 112.8px, #f07660 112.8px 141.0px, #f07e6a 141.0px 169.2px, #ee8977 169.2px 197.4px, #e4a090 197.4px 225.6px, #cfaca1 225.6px 253.8px, #c6b1aa 253.8px 282.0px, #beb6b2 282.0px 310.2px, #a6c6c2 310.2px 338.4px, #a1c9c5 338.4px 366.6px)"></div>
<div class="t" style="left:405.3px;top:214.7px;font-size:10.9px;letter-spacing:-0.3px;color:#000">7.1</div>
<div class="t" style="left:66.9px;top:214.7px;font-size:10.9px;letter-spacing:-0.3px;color:#000;-webkit-text-stroke:0.15px #000">72.5</div>
<div class="t" style="left:95.1px;top:214.7px;font-size:10.9px;letter-spacing:-0.3px;color:#000;-webkit-text-stroke:0.15px #000">58.0</div>
<div class="t" style="left:123.3px;top:214.7px;font-size:10.9px;letter-spacing:-0.3px;color:#000;-webkit-text-stroke:0.15px #000">49.0</div>
<div class="t" style="left:151.5px;top:214.7px;font-size:10.9px;letter-spacing:-0.3px;color:#000;-webkit-text-stroke:0.15px #000">44.8</div>
<div class="t" style="left:179.7px;top:214.7px;font-size:10.9px;letter-spacing:-0.3px;color:#000;-webkit-text-stroke:0.15px #000">40.8</div>
<div class="t" style="left:207.9px;top:214.7px;font-size:10.9px;letter-spacing:-0.3px;color:#000;-webkit-text-stroke:0.15px #000">36.0</div>
<div class="t" style="left:236.1px;top:214.7px;font-size:10.9px;letter-spacing:-0.3px;color:#000;-webkit-text-stroke:0.15px #000">31.5</div>
<div class="t" style="left:264.3px;top:214.7px;font-size:10.9px;letter-spacing:-0.3px;color:#000;-webkit-text-stroke:0.15px #000">24.5</div>
<div class="t" style="left:292.5px;top:214.7px;font-size:10.9px;letter-spacing:-0.3px;color:#000;-webkit-text-stroke:0.15px #000">20.0</div>
<div class="t" style="left:320.7px;top:214.7px;font-size:10.9px;letter-spacing:-0.3px;color:#000;-webkit-text-stroke:0.15px #000">17.0</div>
<div class="t" style="left:348.9px;top:214.7px;font-size:10.9px;letter-spacing:-0.3px;color:#000;-webkit-text-stroke:0.15px #000">13.0</div>
<div class="t" style="left:377.1px;top:214.7px;font-size:10.9px;letter-spacing:-0.3px;color:#000;-webkit-text-stroke:0.15px #000">9.1</div>
<div class="a" style="left:0;top:227.5px;width:66px;height:14px;border-bottom:1px solid #a8a8a8"></div>
<div class="t" style="left:1.5px;top:228.7px;font-size:10.8px;letter-spacing:-0.2px;color:#111">5000</div>
<div class="a" style="left:65.7px;top:227.5px;width:366.6px;height:14px;background:linear-gradient(90deg,#ed1f0a 0.0px 28.2px, #f14b2c 28.2px 56.4px, #f0694f 56.4px 84.6px, #f0715a 84.6px 112.8px, #f07762 112.8px 141.0px, #f07f6d 141.0px 169.2px, #ec8e7c 169.2px 197.4px, #dea294 197.4px 225.6px, #cbaea5 225.6px 253.8px, #c1b4af 253.8px 282.0px, #b4bdb9 282.0px 310.2px, #a7c6c2 310.2px 338.4px, #a1c9c5 338.4px 366.6px)"></div>
<div class="t" style="left:405.3px;top:228.7px;font-size:10.9px;letter-spacing:-0.3px;color:#000">7.3</div>
<div class="t" style="left:66.9px;top:228.7px;font-size:10.9px;letter-spacing:-0.3px;color:#000;-webkit-text-stroke:0.15px #000">72.0</div>
<div class="t" style="left:95.1px;top:228.7px;font-size:10.9px;letter-spacing:-0.3px;color:#000;-webkit-text-stroke:0.15px #000">57.0</div>
<div class="t" style="left:123.3px;top:228.7px;font-size:10.9px;letter-spacing:-0.3px;color:#000;-webkit-text-stroke:0.15px #000">48.0</div>
<div class="t" style="left:151.5px;top:228.7px;font-size:10.9px;letter-spacing:-0.3px;color:#000;-webkit-text-stroke:0.15px #000">44.0</div>
<div class="t" style="left:179.7px;top:228.7px;font-size:10.9px;letter-spacing:-0.3px;color:#000;-webkit-text-stroke:0.15px #000">40.0</div>
<div class="t" style="left:207.9px;top:228.7px;font-size:10.9px;letter-spacing:-0.3px;color:#000;-webkit-text-stroke:0.15px #000">35.0</div>
<div class="t" style="left:236.1px;top:228.7px;font-size:10.9px;letter-spacing:-0.3px;color:#000;-webkit-text-stroke:0.15px #000">30.0</div>
<div class="t" style="left:264.3px;top:228.7px;font-size:10.9px;letter-spacing:-0.3px;color:#000;-webkit-text-stroke:0.15px #000">23.5</div>
<div class="t" style="left:292.5px;top:228.7px;font-size:10.9px;letter-spacing:-0.3px;color:#000;-webkit-text-stroke:0.15px #000">19.0</div>
<div class="t" style="left:320.7px;top:228.7px;font-size:10.9px;letter-spacing:-0.3px;color:#000;-webkit-text-stroke:0.15px #000">14.3</div>
<div class="t" style="left:348.9px;top:228.7px;font-size:10.9px;letter-spacing:-0.3px;color:#000;-webkit-text-stroke:0.15px #000">11.5</div>
<div class="t" style="left:377.1px;top:228.7px;font-size:10.9px;letter-spacing:-0.3px;color:#000;-webkit-text-stroke:0.15px #000">9.2</div>
<div class="a" style="left:0;top:241.5px;width:66px;height:14px;border-bottom:1px solid #a8a8a8"></div>
<div class="t" style="left:1.5px;top:242.7px;font-size:10.8px;letter-spacing:-0.2px;color:#111">5500</div>
<div class="a" style="left:65.7px;top:241.5px;width:366.6px;height:14px;background:linear-gradient(90deg,#ed1f0a 0.0px 28.2px, #f14a2b 28.2px 56.4px, #f0694f 56.4px 84.6px, #f0715a 84.6px 112.8px, #f07762 112.8px 141.0px, #f07f6d 141.0px 169.2px, #ec8e7c 169.2px 197.4px, #d4a99d 197.4px 225.6px, #c6b1aa 225.6px 253.8px, #c0b5b0 253.8px 282.0px, #b3beba 282.0px 310.2px, #a6c6c2 310.2px 338.4px, #a1c9c5 338.4px 366.6px)"></div>
<div class="t" style="left:405.3px;top:242.7px;font-size:10.9px;letter-spacing:-0.3px;color:#000">7.2</div>
<div class="t" style="left:66.9px;top:242.7px;font-size:10.9px;letter-spacing:-0.3px;color:#000;-webkit-text-stroke:0.15px #000">72.0</div>
<div class="t" style="left:95.1px;top:242.7px;font-size:10.9px;letter-spacing:-0.3px;color:#000;-webkit-text-stroke:0.15px #000">57.3</div>
<div class="t" style="left:123.3px;top:242.7px;font-size:10.9px;letter-spacing:-0.3px;color:#000;-webkit-text-stroke:0.15px #000">48.0</div>
<div class="t" style="left:151.5px;top:242.7px;font-size:10.9px;letter-spacing:-0.3px;color:#000;-webkit-text-stroke:0.15px #000">44.0</div>
<div class="t" style="left:179.7px;top:242.7px;font-size:10.9px;letter-spacing:-0.3px;color:#000;-webkit-text-stroke:0.15px #000">40.0</div>
<div class="t" style="left:207.9px;top:242.7px;font-size:10.9px;letter-spacing:-0.3px;color:#000;-webkit-text-stroke:0.15px #000">35.0</div>
<div class="t" style="left:236.1px;top:242.7px;font-size:10.9px;letter-spacing:-0.3px;color:#000;-webkit-text-stroke:0.15px #000">30.0</div>
<div class="t" style="left:264.3px;top:242.7px;font-size:10.9px;letter-spacing:-0.3px;color:#000;-webkit-text-stroke:0.15px #000">21.3</div>
<div class="t" style="left:292.5px;top:242.7px;font-size:10.9px;letter-spacing:-0.3px;color:#000;-webkit-text-stroke:0.15px #000">16.9</div>
<div class="t" style="left:320.7px;top:242.7px;font-size:10.9px;letter-spacing:-0.3px;color:#000;-webkit-text-stroke:0.15px #000">14.0</div>
<div class="t" style="left:348.9px;top:242.7px;font-size:10.9px;letter-spacing:-0.3px;color:#000;-webkit-text-stroke:0.15px #000">11.3</div>
<div class="t" style="left:377.1px;top:242.7px;font-size:10.9px;letter-spacing:-0.3px;color:#000;-webkit-text-stroke:0.15px #000">9.0</div>
<div class="a" style="left:0;top:255.5px;width:66px;height:14px;border-bottom:1px solid #a8a8a8"></div>
<div class="t" style="left:1.5px;top:256.7px;font-size:10.8px;letter-spacing:-0.2px;color:#111">6000</div>
<div class="a" style="left:65.7px;top:255.5px;width:366.6px;height:14px;background:linear-gradient(90deg,#ed1f0a 0.0px 28.2px, #f1492a 28.2px 56.4px, #f0694f 56.4px 84.6px, #f0735c 84.6px 112.8px, #f07964 112.8px 141.0px, #f07f6d 141.0px 169.2px, #ec8e7c 169.2px 197.4px, #d3a99d 197.4px 225.6px, #c2b4ae 225.6px 253.8px, #bbb8b4 253.8px 282.0px, #adc2be 282.0px 310.2px, #a8c5c1 310.2px 338.4px, #a2c8c4 338.4px 366.6px)"></div>
<div class="t" style="left:405.3px;top:256.7px;font-size:10.9px;letter-spacing:-0.3px;color:#000">7.8</div>
<div class="t" style="left:66.9px;top:256.7px;font-size:10.9px;letter-spacing:-0.3px;color:#000;-webkit-text-stroke:0.15px #000">72.0</div>
<div class="t" style="left:95.1px;top:256.7px;font-size:10.9px;letter-spacing:-0.3px;color:#000;-webkit-text-stroke:0.15px #000">57.5</div>
<div class="t" style="left:123.3px;top:256.7px;font-size:10.9px;letter-spacing:-0.3px;color:#000;-webkit-text-stroke:0.15px #000">48.0</div>
<div class="t" style="left:151.5px;top:256.7px;font-size:10.9px;letter-spacing:-0.3px;color:#000;-webkit-text-stroke:0.15px #000">43.0</div>
<div class="t" style="left:179.7px;top:256.7px;font-size:10.9px;letter-spacing:-0.3px;color:#000;-webkit-text-stroke:0.15px #000">39.0</div>
<div class="t" style="left:207.9px;top:256.7px;font-size:10.9px;letter-spacing:-0.3px;color:#000;-webkit-text-stroke:0.15px #000">35.0</div>
<div class="t" style="left:236.1px;top:256.7px;font-size:10.9px;letter-spacing:-0.3px;color:#000;-webkit-text-stroke:0.15px #000">30.0</div>
<div class="t" style="left:264.3px;top:256.7px;font-size:10.9px;letter-spacing:-0.3px;color:#000;-webkit-text-stroke:0.15px #000">21.2</div>
<div class="t" style="left:292.5px;top:256.7px;font-size:10.9px;letter-spacing:-0.3px;color:#000;-webkit-text-stroke:0.15px #000">15.0</div>
<div class="t" style="left:320.7px;top:256.7px;font-size:10.9px;letter-spacing:-0.3px;color:#000;-webkit-text-stroke:0.15px #000">12.5</div>
<div class="t" style="left:348.9px;top:256.7px;font-size:10.9px;letter-spacing:-0.3px;color:#000;-webkit-text-stroke:0.15px #000">10.5</div>
<div class="t" style="left:377.1px;top:256.7px;font-size:10.9px;letter-spacing:-0.3px;color:#000;-webkit-text-stroke:0.15px #000">9.5</div>
<div class="a" style="left:0;top:269.5px;width:66px;height:14px;border-bottom:1px solid #a8a8a8"></div>
<div class="t" style="left:1.5px;top:270.7px;font-size:10.8px;letter-spacing:-0.2px;color:#111">6500</div>
<div class="a" style="left:65.7px;top:269.5px;width:366.6px;height:14px;background:linear-gradient(90deg,#ed1f0a 0.0px 28.2px, #f1492a 28.2px 56.4px, #f0694f 56.4px 84.6px, #f0735c 84.6px 112.8px, #f07a65 112.8px 141.0px, #f0806e 141.0px 169.2px, #ec8e7c 169.2px 197.4px, #d3a99d 197.4px 225.6px, #c2b4ae 225.6px 253.8px, #b7bbb7 253.8px 282.0px, #aac4c0 282.0px 310.2px, #a4c7c3 310.2px 338.4px, #a0cac7 338.4px 366.6px)"></div>
<div class="t" style="left:405.3px;top:270.7px;font-size:10.9px;letter-spacing:-0.3px;color:#000">7.1</div>
<div class="t" style="left:66.9px;top:270.7px;font-size:10.9px;letter-spacing:-0.3px;color:#000;-webkit-text-stroke:0.15px #000">72.0</div>
<div class="t" style="left:95.1px;top:270.7px;font-size:10.9px;letter-spacing:-0.3px;color:#000;-webkit-text-stroke:0.15px #000">57.5</div>
<div class="t" style="left:123.3px;top:270.7px;font-size:10.9px;letter-spacing:-0.3px;color:#000;-webkit-text-stroke:0.15px #000">48.0</div>
<div class="t" style="left:151.5px;top:270.7px;font-size:10.9px;letter-spacing:-0.3px;color:#000;-webkit-text-stroke:0.15px #000">43.0</div>
<div class="t" style="left:179.7px;top:270.7px;font-size:10.9px;letter-spacing:-0.3px;color:#000;-webkit-text-stroke:0.15px #000">38.5</div>
<div class="t" style="left:207.9px;top:270.7px;font-size:10.9px;letter-spacing:-0.3px;color:#000;-webkit-text-stroke:0.15px #000">34.5</div>
<div class="t" style="left:236.1px;top:270.7px;font-size:10.9px;letter-spacing:-0.3px;color:#000;-webkit-text-stroke:0.15px #000">30.0</div>
<div class="t" style="left:264.3px;top:270.7px;font-size:10.9px;letter-spacing:-0.3px;color:#000;-webkit-text-stroke:0.15px #000">21.2</div>
<div class="t" style="left:292.5px;top:270.7px;font-size:10.9px;letter-spacing:-0.3px;color:#000;-webkit-text-stroke:0.15px #000">15.0</div>
<div class="t" style="left:320.7px;top:270.7px;font-size:10.9px;letter-spacing:-0.3px;color:#000;-webkit-text-stroke:0.15px #000">12.0</div>
<div class="t" style="left:348.9px;top:270.7px;font-size:10.9px;letter-spacing:-0.3px;color:#000;-webkit-text-stroke:0.15px #000">10.0</div>
<div class="t" style="left:377.1px;top:270.7px;font-size:10.9px;letter-spacing:-0.3px;color:#000;-webkit-text-stroke:0.15px #000">8.5</div>
</div>
<div class="a" style="left:239.7px;top:325.5px;width:1px;height:266px;background:rgba(255,255,255,0.28)"></div><div class="a" style="left:267.9px;top:325.5px;width:1px;height:266px;background:rgba(255,255,255,0.28)"></div><div class="a" style="left:296.1px;top:325.5px;width:1px;height:266px;background:rgba(255,255,255,0.28)"></div><div class="a" style="left:324.3px;top:325.5px;width:1px;height:266px;background:rgba(255,255,255,0.28)"></div><div class="a" style="left:352.5px;top:325.5px;width:1px;height:266px;background:rgba(255,255,255,0.28)"></div><div class="a" style="left:380.7px;top:325.5px;width:1px;height:266px;background:rgba(255,255,255,0.28)"></div><div class="a" style="left:408.9px;top:325.5px;width:1px;height:266px;background:rgba(255,255,255,0.28)"></div><div class="a" style="left:437.1px;top:325.5px;width:1px;height:266px;background:rgba(255,255,255,0.28)"></div><div class="a" style="left:465.3px;top:325.5px;width:1px;height:266px;background:rgba(255,255,255,0.28)"></div><div class="a" style="left:493.5px;top:325.5px;width:1px;height:266px;background:rgba(255,255,255,0.28)"></div><div class="a" style="left:521.7px;top:325.5px;width:1px;height:266px;background:rgba(255,255,255,0.28)"></div><div class="a" style="left:549.9px;top:325.5px;width:1px;height:266px;background:rgba(255,255,255,0.28)"></div><div class="a" style="left:578.1px;top:325.5px;width:1px;height:266px;background:rgba(255,255,255,0.28)"></div><div class="a" style="left:239.7px;top:339.0px;width:366.6px;height:1px;background:rgba(255,255,255,0.28)"></div><div class="a" style="left:239.7px;top:353.0px;width:366.6px;height:1px;background:rgba(255,255,255,0.28)"></div><div class="a" style="left:239.7px;top:367.0px;width:366.6px;height:1px;background:rgba(255,255,255,0.28)"></div><div class="a" style="left:239.7px;top:381.0px;width:366.6px;height:1px;background:rgba(255,255,255,0.28)"></div><div class="a" style="left:239.7px;top:395.0px;width:366.6px;height:1px;background:rgba(255,255,255,0.28)"></div><div class="a" style="left:239.7px;top:409.0px;width:366.6px;height:1px;background:rgba(255,255,255,0.28)"></div><div class="a" style="left:239.7px;top:423.0px;width:366.6px;height:1px;background:rgba(255,255,255,0.28)"></div><div class="a" style="left:239.7px;top:437.0px;width:366.6px;height:1px;background:rgba(255,255,255,0.28)"></div><div class="a" style="left:239.7px;top:451.0px;width:366.6px;height:1px;background:rgba(255,255,255,0.28)"></div><div class="a" style="left:239.7px;top:465.0px;width:366.6px;height:1px;background:rgba(255,255,255,0.28)"></div><div class="a" style="left:239.7px;top:479.0px;width:366.6px;height:1px;background:rgba(255,255,255,0.28)"></div><div class="a" style="left:239.7px;top:493.0px;width:366.6px;height:1px;background:rgba(255,255,255,0.28)"></div><div class="a" style="left:239.7px;top:507.0px;width:366.6px;height:1px;background:rgba(255,255,255,0.28)"></div><div class="a" style="left:239.7px;top:521.0px;width:366.6px;height:1px;background:rgba(255,255,255,0.28)"></div><div class="a" style="left:239.7px;top:535.0px;width:366.6px;height:1px;background:rgba(255,255,255,0.28)"></div><div class="a" style="left:239.7px;top:549.0px;width:366.6px;height:1px;background:rgba(255,255,255,0.28)"></div><div class="a" style="left:239.7px;top:563.0px;width:366.6px;height:1px;background:rgba(255,255,255,0.28)"></div><div class="a" style="left:239.7px;top:577.0px;width:366.6px;height:1px;background:rgba(255,255,255,0.28)"></div>
<div class="a" style="left:580px;top:325px;width:14px;height:266px;background:#f0f0f0"></div>
<div class="a" style="left:580px;top:341px;width:14px;height:15px;background:#cdcdcd"></div>
<svg class="a" style="left:583px;top:331px" width="9" height="6"><path d="M1 5l3.5-3.5L8 5" stroke="#444" stroke-width="1.4" fill="none"/></svg>
<svg class="a" style="left:583px;top:581px" width="9" height="6"><path d="M1 1l3.5 3.5L8 1" stroke="#444" stroke-width="1.4" fill="none"/></svg>
<svg class="a" style="left:582px;top:310px" width="11" height="11"><path d="M5.5 1L10 10H1z" fill="#777"/><path d="M2 5h7M1.5 7h8" stroke="#eee" stroke-width="0.8"/></svg>
<div class="a" style="left:174px;top:591px;width:406px;height:13px;background:#f0f0f0"></div>
<div class="a" style="left:190px;top:592px;width:15px;height:12px;background:#cdcdcd"></div>
<svg class="a" style="left:178px;top:594px" width="6" height="9"><path d="M5 1L1.5 4.5 5 8" stroke="#444" stroke-width="1.4" fill="none"/></svg>
<svg class="a" style="left:570px;top:594px" width="6" height="9"><path d="M1 1l3.5 3.5L1 8" stroke="#444" stroke-width="1.4" fill="none"/></svg>
<div class="a" style="left:580px;top:591px;width:15px;height:14px;background:#fff"></div>
<div class="a" style="left:601px;top:434px;width:1px;height:18px;border-left:1px dotted #888"></div>
<div class="a" style="left:0;top:754px;width:1024px;height:17px;background:linear-gradient(#dadada,#cacaca 30%,#c8c8c8)"></div>
<div class="a" style="left:0;top:754px;width:102px;height:17px;background:linear-gradient(90deg,#78e078,#3cf23c)"></div>
<div class="a" style="left:102px;top:754px;width:103px;height:17px;background:linear-gradient(90deg,#ff8c8c,#ff3c3c)"></div>
<div class="t" style="left:0;top:758.8px;width:102px;text-align:center;font-size:9.6px;letter-spacing:0.45px;color:#0a300a">Logging</div>
<div class="t" style="left:102px;top:758.8px;width:103px;text-align:center;font-size:9.6px;letter-spacing:0.45px;color:#3a0808">Not Live</div>
<div class="t" style="left:984.5px;top:758.8px;font-size:9.6px;letter-spacing:0.35px;color:#222">Module:</div>
<svg class="a" style="left:620px;top:300px" width="210" height="310" viewBox="620 300 210 310"><rect x="644" y="310.4" width="150.5" height="277.2" fill="#000"/><path d="M663.0 310.4V587.6" stroke="#dcdcdc" stroke-width="1.5"/><path d="M682.0 310.4V587.6" stroke="#dcdcdc" stroke-width="1.5"/><path d="M700.0 310.4V587.6" stroke="#dcdcdc" stroke-width="1.5"/><path d="M719.0 310.4V587.6" stroke="#dcdcdc" stroke-width="1.5"/><path d="M738.0 310.4V587.6" stroke="#dcdcdc" stroke-width="1.5"/><path d="M757.0 310.4V587.6" stroke="#dcdcdc" stroke-width="1.5"/><path d="M776.0 310.4V587.6" stroke="#dcdcdc" stroke-width="1.5"/><path d="M644 512.0H794.5" stroke="#dcdcdc" stroke-width="1.5"/><text x="641.8" y="515.9" font-size="9.2" fill="#333" text-anchor="end" font-family="Liberation Sans">0</text><path d="M644 486.0H794.5" stroke="#dcdcdc" stroke-width="1.5"/><text x="641.8" y="490.0" font-size="9.2" fill="#333" text-anchor="end" font-family="Liberation Sans">10</text><path d="M644 461.0H794.5" stroke="#dcdcdc" stroke-width="1.5"/><text x="641.8" y="464.1" font-size="9.2" fill="#333" text-anchor="end" font-family="Liberation Sans">20</text><path d="M644 435.0H794.5" stroke="#dcdcdc" stroke-width="1.5"/><text x="641.8" y="438.2" font-size="9.2" fill="#333" text-anchor="end" font-family="Liberation Sans">30</text><path d="M644 409.0H794.5" stroke="#dcdcdc" stroke-width="1.5"/><text x="641.8" y="412.3" font-size="9.2" fill="#333" text-anchor="end" font-family="Liberation Sans">40</text><path d="M644 383.0H794.5" stroke="#dcdcdc" stroke-width="1.5"/><text x="641.8" y="386.4" font-size="9.2" fill="#333" text-anchor="end" font-family="Liberation Sans">50</text><path d="M644 357.0H794.5" stroke="#dcdcdc" stroke-width="1.5"/><text x="641.8" y="360.5" font-size="9.2" fill="#333" text-anchor="end" font-family="Liberation Sans">60</text><path d="M644 331.0H794.5" stroke="#dcdcdc" stroke-width="1.5"/><text x="641.8" y="334.6" font-size="9.2" fill="#333" text-anchor="end" font-family="Liberation Sans">70</text><text x="663.3" y="600.3" font-size="9.2" fill="#222" text-anchor="middle" font-family="Liberation Sans">1000</text><text x="682.2" y="600.3" font-size="9.2" fill="#222" text-anchor="middle" font-family="Liberation Sans">2000</text><text x="701.0" y="600.3" font-size="9.2" fill="#222" text-anchor="middle" font-family="Liberation Sans">3000</text><text x="719.8" y="600.3" font-size="9.2" fill="#222" text-anchor="middle" font-family="Liberation Sans">4000</text><text x="738.6" y="600.3" font-size="9.2" fill="#222" text-anchor="middle" font-family="Liberation Sans">5000</text><text x="757.5" y="600.3" font-size="9.2" fill="#222" text-anchor="middle" font-family="Liberation Sans">6000</text><text x="776.3" y="600.3" font-size="9.2" fill="#222" text-anchor="middle" font-family="Liberation Sans">7000</text><g clip-path="url(#chclip)"><defs><clipPath id="chclip"><rect x="644" y="310.4" width="150.5" height="280"/></clipPath></defs><polyline points="653.4,425.6 656.2,419.2 658.1,414.0 662.8,369.9 667.5,346.6 672.2,336.3 677.0,330.3 681.7,328.5 686.4,327.7 691.1,327.2 695.8,326.4 700.5,325.9 709.9,324.6 719.3,323.3 728.7,324.6 738.1,325.9 747.6,325.9 757.0,325.9 766.4,325.9 775.8,325.9" fill="none" stroke="#e03828" stroke-width="1.4"/><polyline points="653.4,465.3 656.2,459.6 658.1,454.4 662.8,419.7 667.5,392.2 672.2,382.9 677.0,378.0 681.7,376.4 686.4,375.1 691.1,373.6 695.8,370.7 700.5,367.9 709.9,363.7 719.3,359.6 728.7,362.2 738.1,364.8 747.6,364.0 757.0,363.5 766.4,363.5 775.8,363.5" fill="none" stroke="#e34434" stroke-width="1.4"/><polyline points="653.4,491.7 656.2,486.5 658.1,481.3 662.8,450.2 667.5,419.2 672.2,415.8 677.0,411.4 681.7,408.8 686.4,403.6 691.1,401.0 695.8,398.4 700.5,395.8 709.9,389.4 719.3,382.9 728.7,385.5 738.1,388.1 747.6,388.1 757.0,388.1 766.4,388.1 775.8,388.1" fill="none" stroke="#e55140" stroke-width="1.4"/><polyline points="653.4,503.3 656.2,498.2 658.1,493.0 662.8,459.8 667.5,434.7 672.2,431.6 677.0,428.2 681.7,426.9 686.4,419.4 691.1,417.9 695.8,414.0 700.5,410.1 709.9,402.3 719.3,394.6 728.7,396.4 738.1,398.4 747.6,398.4 757.0,401.0 766.4,401.0 775.8,401.0" fill="none" stroke="#e85d4c" stroke-width="1.4"/><polyline points="653.4,515.0 656.2,509.8 658.1,504.6 662.8,469.7 667.5,448.9 672.2,447.1 677.0,445.1 681.7,442.5 686.4,435.2 691.1,433.4 695.8,427.4 700.5,421.8 709.9,413.2 719.3,404.9 728.7,406.7 738.1,408.8 747.6,408.8 757.0,411.4 766.4,412.7 775.8,412.7" fill="none" stroke="#eb6a58" stroke-width="1.4"/><polyline points="653.4,522.8 656.2,517.6 658.1,512.4 662.8,477.4 667.5,463.2 672.2,461.4 677.0,460.6 681.7,458.0 686.4,445.1 691.1,441.7 695.8,437.0 700.5,432.6 709.9,424.6 719.3,416.6 728.7,419.2 738.1,421.8 747.6,421.8 757.0,421.8 766.4,423.0 775.8,423.0" fill="none" stroke="#ed7665" stroke-width="1.4"/><polyline points="653.4,530.5 656.2,525.4 658.1,520.2 662.8,486.5 667.5,478.7 672.2,473.0 677.0,471.0 681.7,468.4 686.4,459.8 691.1,454.1 695.8,449.5 700.5,445.1 709.9,436.0 719.3,426.9 728.7,430.8 738.1,434.7 747.6,434.7 757.0,434.7 766.4,434.7 775.8,434.7" fill="none" stroke="#f08371" stroke-width="1.4"/><polyline points="653.4,538.3 656.2,533.1 658.1,528.7 662.8,502.0 667.5,494.5 672.2,487.8 677.0,483.9 681.7,481.3 686.4,471.0 691.1,468.4 695.8,465.8 700.5,463.2 709.9,454.1 719.3,445.1 728.7,448.9 738.1,451.5 747.6,457.2 757.0,457.5 766.4,457.5 775.8,457.5" fill="none" stroke="#ef9081" stroke-width="1.4"/><polyline points="653.4,543.7 656.2,539.1 658.1,535.7 662.8,512.4 667.5,502.3 672.2,498.2 677.0,493.0 681.7,490.4 686.4,484.4 691.1,481.3 695.8,476.9 700.5,472.5 709.9,466.0 719.3,459.3 728.7,460.6 738.1,463.2 747.6,468.6 757.0,473.5 766.4,473.5 775.8,473.5" fill="none" stroke="#ee9e92" stroke-width="1.4"/><polyline points="653.4,548.4 656.2,544.0 658.1,540.4 662.8,517.1 667.5,507.5 672.2,505.9 677.0,500.0 681.7,496.9 686.4,492.5 691.1,489.6 695.8,486.2 700.5,483.1 709.9,478.5 719.3,469.7 728.7,468.4 738.1,475.4 747.6,476.1 757.0,480.0 766.4,481.3 775.8,481.3" fill="none" stroke="#eeaca2" stroke-width="1.4"/><polyline points="653.4,553.1 656.2,548.9 658.1,544.8 662.8,521.5 667.5,512.7 672.2,512.4 677.0,505.9 681.7,503.3 686.4,499.4 691.1,495.6 695.8,492.2 700.5,489.1 709.9,488.1 719.3,480.5 728.7,478.7 738.1,482.6 747.6,483.1 757.0,485.2 766.4,486.5 775.8,486.5" fill="none" stroke="#edbab3" stroke-width="1.4"/><polyline points="653.4,556.4 656.2,552.3 658.1,548.4 662.8,526.6 667.5,518.1 672.2,517.1 677.0,510.6 681.7,508.5 686.4,503.9 691.1,499.4 695.8,496.3 700.5,493.2 709.9,493.8 719.3,494.3 728.7,488.8 738.1,488.6 747.6,489.1 757.0,487.8 766.4,490.4 775.8,490.4" fill="none" stroke="#ecc7c3" stroke-width="1.4"/><polyline points="653.4,561.4 656.2,556.9 658.1,552.8 662.8,531.6 667.5,523.2 672.2,521.5 677.0,515.2 681.7,512.7 686.4,508.6 691.1,504.8 695.8,502.0 700.5,499.2 709.9,499.2 719.3,499.0 728.7,494.1 738.1,493.5 747.6,493.6 757.0,492.2 766.4,494.0 775.8,493.7" fill="none" stroke="#e2cecc" stroke-width="1.4"/><polyline points="653.4,566.4 656.2,561.4 658.1,557.1 662.8,536.6 667.5,528.3 672.2,525.9 677.0,519.8 681.7,516.9 686.4,513.4 691.1,510.1 695.8,507.7 700.5,505.2 709.9,504.6 719.3,503.8 728.7,499.4 738.1,498.4 747.6,498.2 757.0,496.6 766.4,497.6 775.8,496.9" fill="none" stroke="#d7d3d4" stroke-width="1.4"/><polyline points="653.4,571.3 656.2,566.0 658.1,561.5 662.8,541.5 667.5,533.4 672.2,530.3 677.0,524.4 681.7,521.1 686.4,518.2 691.1,515.4 695.8,513.3 700.5,511.2 709.9,510.1 719.3,508.5 728.7,504.6 738.1,503.3 747.6,502.7 757.0,501.0 766.4,501.3 775.8,500.2" fill="none" stroke="#cdd9dc" stroke-width="1.4"/><polyline points="653.4,576.3 656.2,570.6 658.1,565.8 662.8,546.5 667.5,538.5 672.2,534.7 677.0,529.1 681.7,525.3 686.4,523.0 691.1,520.7 695.8,519.0 700.5,517.2 709.9,515.5 719.3,513.3 728.7,509.9 738.1,508.3 747.6,507.2 757.0,505.4 766.4,504.9 775.8,503.5" fill="none" stroke="#aedfe3" stroke-width="1.4"/><polyline points="653.4,581.3 656.2,575.2 658.1,570.2 662.8,551.5 667.5,543.6 672.2,539.1 677.0,533.7 681.7,529.5 686.4,527.8 691.1,526.0 695.8,524.6 700.5,523.2 709.9,520.9 719.3,518.0 728.7,515.2 738.1,513.2 747.6,511.8 757.0,509.8 766.4,508.5 775.8,506.8" fill="none" stroke="#7fe3ea" stroke-width="1.4"/><polyline points="653.4,586.2 656.2,579.7 658.1,574.6 662.8,556.4 667.5,548.7 672.2,543.5 677.0,538.3 681.7,533.6 686.4,532.6 691.1,531.3 695.8,530.3 700.5,529.2 709.9,526.4 719.3,522.8 728.7,520.4 738.1,518.1 747.6,516.3 757.0,514.2 766.4,512.1 775.8,510.1" fill="none" stroke="#50e8f0" stroke-width="1.4"/><rect x="650.5" y="583.5" width="5" height="5" fill="#000" stroke="#f6f6f6" stroke-width="1.25"/><rect x="653.5" y="577.5" width="5" height="5" fill="#000" stroke="#f6f6f6" stroke-width="1.25"/><rect x="655.5" y="572.5" width="5" height="5" fill="#000" stroke="#f6f6f6" stroke-width="1.25"/><rect x="660.5" y="553.5" width="5" height="5" fill="#000" stroke="#f6f6f6" stroke-width="1.25"/><rect x="665.5" y="546.5" width="5" height="5" fill="#000" stroke="#f6f6f6" stroke-width="1.25"/><rect x="669.5" y="540.5" width="5" height="5" fill="#000" stroke="#f6f6f6" stroke-width="1.25"/><rect x="674.5" y="535.5" width="5" height="5" fill="#000" stroke="#f6f6f6" stroke-width="1.25"/><rect x="679.5" y="531.5" width="5" height="5" fill="#000" stroke="#f6f6f6" stroke-width="1.25"/><rect x="683.5" y="530.5" width="5" height="5" fill="#000" stroke="#f6f6f6" stroke-width="1.25"/><rect x="688.5" y="528.5" width="5" height="5" fill="#000" stroke="#f6f6f6" stroke-width="1.25"/><rect x="693.5" y="527.5" width="5" height="5" fill="#000" stroke="#f6f6f6" stroke-width="1.25"/><rect x="697.5" y="526.5" width="5" height="5" fill="#000" stroke="#f6f6f6" stroke-width="1.25"/><rect x="707.5" y="523.5" width="5" height="5" fill="#000" stroke="#f6f6f6" stroke-width="1.25"/><rect x="716.5" y="520.5" width="5" height="5" fill="#000" stroke="#f6f6f6" stroke-width="1.25"/><rect x="726.5" y="517.5" width="5" height="5" fill="#000" stroke="#f6f6f6" stroke-width="1.25"/><rect x="735.5" y="515.5" width="5" height="5" fill="#000" stroke="#f6f6f6" stroke-width="1.25"/><rect x="745.5" y="513.5" width="5" height="5" fill="#000" stroke="#f6f6f6" stroke-width="1.25"/><rect x="754.5" y="511.5" width="5" height="5" fill="#000" stroke="#f6f6f6" stroke-width="1.25"/><rect x="763.5" y="509.5" width="5" height="5" fill="#000" stroke="#f6f6f6" stroke-width="1.25"/><rect x="773.5" y="507.5" width="5" height="5" fill="#000" stroke="#f6f6f6" stroke-width="1.25"/><rect x="650.5" y="578.5" width="5" height="5" fill="#000" stroke="#f6f6f6" stroke-width="1.25"/><rect x="653.5" y="572.5" width="5" height="5" fill="#000" stroke="#f6f6f6" stroke-width="1.25"/><rect x="655.5" y="567.5" width="5" height="5" fill="#000" stroke="#f6f6f6" stroke-width="1.25"/><rect x="660.5" y="548.5" width="5" height="5" fill="#000" stroke="#f6f6f6" stroke-width="1.25"/><rect x="665.5" y="541.5" width="5" height="5" fill="#000" stroke="#f6f6f6" stroke-width="1.25"/><rect x="669.5" y="536.5" width="5" height="5" fill="#000" stroke="#f6f6f6" stroke-width="1.25"/><rect x="674.5" y="531.5" width="5" height="5" fill="#000" stroke="#f6f6f6" stroke-width="1.25"/><rect x="679.5" y="526.5" width="5" height="5" fill="#000" stroke="#f6f6f6" stroke-width="1.25"/><rect x="683.5" y="525.5" width="5" height="5" fill="#000" stroke="#f6f6f6" stroke-width="1.25"/><rect x="688.5" y="523.5" width="5" height="5" fill="#000" stroke="#f6f6f6" stroke-width="1.25"/><rect x="693.5" y="522.5" width="5" height="5" fill="#000" stroke="#f6f6f6" stroke-width="1.25"/><rect x="697.5" y="520.5" width="5" height="5" fill="#000" stroke="#f6f6f6" stroke-width="1.25"/><rect x="707.5" y="518.5" width="5" height="5" fill="#000" stroke="#f6f6f6" stroke-width="1.25"/><rect x="716.5" y="515.5" width="5" height="5" fill="#000" stroke="#f6f6f6" stroke-width="1.25"/><rect x="726.5" y="512.5" width="5" height="5" fill="#000" stroke="#f6f6f6" stroke-width="1.25"/><rect x="735.5" y="510.5" width="5" height="5" fill="#000" stroke="#f6f6f6" stroke-width="1.25"/><rect x="745.5" y="509.5" width="5" height="5" fill="#000" stroke="#f6f6f6" stroke-width="1.25"/><rect x="754.5" y="507.5" width="5" height="5" fill="#000" stroke="#f6f6f6" stroke-width="1.25"/><rect x="763.5" y="506.5" width="5" height="5" fill="#000" stroke="#f6f6f6" stroke-width="1.25"/><rect x="773.5" y="504.5" width="5" height="5" fill="#000" stroke="#f6f6f6" stroke-width="1.25"/><rect x="650.5" y="573.5" width="5" height="5" fill="#000" stroke="#f6f6f6" stroke-width="1.25"/><rect x="653.5" y="568.5" width="5" height="5" fill="#000" stroke="#f6f6f6" stroke-width="1.25"/><rect x="655.5" y="563.5" width="5" height="5" fill="#000" stroke="#f6f6f6" stroke-width="1.25"/><rect x="660.5" y="544.5" width="5" height="5" fill="#000" stroke="#f6f6f6" stroke-width="1.25"/><rect x="665.5" y="535.5" width="5" height="5" fill="#000" stroke="#f6f6f6" stroke-width="1.25"/><rect x="669.5" y="532.5" width="5" height="5" fill="#000" stroke="#f6f6f6" stroke-width="1.25"/><rect x="674.5" y="526.5" width="5" height="5" fill="#000" stroke="#f6f6f6" stroke-width="1.25"/><rect x="679.5" y="522.5" width="5" height="5" fill="#000" stroke="#f6f6f6" stroke-width="1.25"/><rect x="683.5" y="520.5" width="5" height="5" fill="#000" stroke="#f6f6f6" stroke-width="1.25"/><rect x="688.5" y="518.5" width="5" height="5" fill="#000" stroke="#f6f6f6" stroke-width="1.25"/><rect x="693.5" y="516.5" width="5" height="5" fill="#000" stroke="#f6f6f6" stroke-width="1.25"/><rect x="697.5" y="514.5" width="5" height="5" fill="#000" stroke="#f6f6f6" stroke-width="1.25"/><rect x="707.5" y="513.5" width="5" height="5" fill="#000" stroke="#f6f6f6" stroke-width="1.25"/><rect x="716.5" y="510.5" width="5" height="5" fill="#000" stroke="#f6f6f6" stroke-width="1.25"/><rect x="726.5" y="507.5" width="5" height="5" fill="#000" stroke="#f6f6f6" stroke-width="1.25"/><rect x="735.5" y="505.5" width="5" height="5" fill="#000" stroke="#f6f6f6" stroke-width="1.25"/><rect x="745.5" y="504.5" width="5" height="5" fill="#000" stroke="#f6f6f6" stroke-width="1.25"/><rect x="754.5" y="502.5" width="5" height="5" fill="#000" stroke="#f6f6f6" stroke-width="1.25"/><rect x="763.5" y="502.5" width="5" height="5" fill="#000" stroke="#f6f6f6" stroke-width="1.25"/><rect x="773.5" y="501.5" width="5" height="5" fill="#000" stroke="#f6f6f6" stroke-width="1.25"/><rect x="650.5" y="568.5" width="5" height="5" fill="#000" stroke="#f6f6f6" stroke-width="1.25"/><rect x="653.5" y="563.5" width="5" height="5" fill="#000" stroke="#f6f6f6" stroke-width="1.25"/><rect x="655.5" y="558.5" width="5" height="5" fill="#000" stroke="#f6f6f6" stroke-width="1.25"/><rect x="660.5" y="539.5" width="5" height="5" fill="#000" stroke="#f6f6f6" stroke-width="1.25"/><rect x="665.5" y="530.5" width="5" height="5" fill="#000" stroke="#f6f6f6" stroke-width="1.25"/><rect x="669.5" y="527.5" width="5" height="5" fill="#000" stroke="#f6f6f6" stroke-width="1.25"/><rect x="674.5" y="521.5" width="5" height="5" fill="#000" stroke="#f6f6f6" stroke-width="1.25"/><rect x="679.5" y="518.5" width="5" height="5" fill="#000" stroke="#f6f6f6" stroke-width="1.25"/><rect x="683.5" y="515.5" width="5" height="5" fill="#000" stroke="#f6f6f6" stroke-width="1.25"/><rect x="688.5" y="512.5" width="5" height="5" fill="#000" stroke="#f6f6f6" stroke-width="1.25"/><rect x="693.5" y="510.5" width="5" height="5" fill="#000" stroke="#f6f6f6" stroke-width="1.25"/><rect x="697.5" y="508.5" width="5" height="5" fill="#000" stroke="#f6f6f6" stroke-width="1.25"/><rect x="707.5" y="507.5" width="5" height="5" fill="#000" stroke="#f6f6f6" stroke-width="1.25"/><rect x="716.5" y="506.5" width="5" height="5" fill="#000" stroke="#f6f6f6" stroke-width="1.25"/><rect x="726.5" y="502.5" width="5" height="5" fill="#000" stroke="#f6f6f6" stroke-width="1.25"/><rect x="735.5" y="500.5" width="5" height="5" fill="#000" stroke="#f6f6f6" stroke-width="1.25"/><rect x="745.5" y="500.5" width="5" height="5" fill="#000" stroke="#f6f6f6" stroke-width="1.25"/><rect x="754.5" y="498.5" width="5" height="5" fill="#000" stroke="#f6f6f6" stroke-width="1.25"/><rect x="763.5" y="498.5" width="5" height="5" fill="#000" stroke="#f6f6f6" stroke-width="1.25"/><rect x="773.5" y="497.5" width="5" height="5" fill="#000" stroke="#f6f6f6" stroke-width="1.25"/><rect x="650.5" y="563.5" width="5" height="5" fill="#000" stroke="#f6f6f6" stroke-width="1.25"/><rect x="653.5" y="558.5" width="5" height="5" fill="#000" stroke="#f6f6f6" stroke-width="1.25"/><rect x="655.5" y="554.5" width="5" height="5" fill="#000" stroke="#f6f6f6" stroke-width="1.25"/><rect x="660.5" y="534.5" width="5" height="5" fill="#000" stroke="#f6f6f6" stroke-width="1.25"/><rect x="665.5" y="525.5" width="5" height="5" fill="#000" stroke="#f6f6f6" stroke-width="1.25"/><rect x="669.5" y="523.5" width="5" height="5" fill="#000" stroke="#f6f6f6" stroke-width="1.25"/><rect x="674.5" y="517.5" width="5" height="5" fill="#000" stroke="#f6f6f6" stroke-width="1.25"/><rect x="679.5" y="514.5" width="5" height="5" fill="#000" stroke="#f6f6f6" stroke-width="1.25"/><rect x="683.5" y="510.5" width="5" height="5" fill="#000" stroke="#f6f6f6" stroke-width="1.25"/><rect x="688.5" y="507.5" width="5" height="5" fill="#000" stroke="#f6f6f6" stroke-width="1.25"/><rect x="693.5" y="505.5" width="5" height="5" fill="#000" stroke="#f6f6f6" stroke-width="1.25"/><rect x="697.5" y="502.5" width="5" height="5" fill="#000" stroke="#f6f6f6" stroke-width="1.25"/><rect x="707.5" y="502.5" width="5" height="5" fill="#000" stroke="#f6f6f6" stroke-width="1.25"/><rect x="716.5" y="501.5" width="5" height="5" fill="#000" stroke="#f6f6f6" stroke-width="1.25"/><rect x="726.5" y="496.5" width="5" height="5" fill="#000" stroke="#f6f6f6" stroke-width="1.25"/><rect x="735.5" y="495.5" width="5" height="5" fill="#000" stroke="#f6f6f6" stroke-width="1.25"/><rect x="745.5" y="495.5" width="5" height="5" fill="#000" stroke="#f6f6f6" stroke-width="1.25"/><rect x="754.5" y="494.5" width="5" height="5" fill="#000" stroke="#f6f6f6" stroke-width="1.25"/><rect x="763.5" y="495.5" width="5" height="5" fill="#000" stroke="#f6f6f6" stroke-width="1.25"/><rect x="773.5" y="494.5" width="5" height="5" fill="#000" stroke="#f6f6f6" stroke-width="1.25"/><rect x="650.5" y="558.5" width="5" height="5" fill="#000" stroke="#f6f6f6" stroke-width="1.25"/><rect x="653.5" y="554.5" width="5" height="5" fill="#000" stroke="#f6f6f6" stroke-width="1.25"/><rect x="655.5" y="550.5" width="5" height="5" fill="#000" stroke="#f6f6f6" stroke-width="1.25"/><rect x="660.5" y="529.5" width="5" height="5" fill="#000" stroke="#f6f6f6" stroke-width="1.25"/><rect x="665.5" y="520.5" width="5" height="5" fill="#000" stroke="#f6f6f6" stroke-width="1.25"/><rect x="669.5" y="518.5" width="5" height="5" fill="#000" stroke="#f6f6f6" stroke-width="1.25"/><rect x="674.5" y="512.5" width="5" height="5" fill="#000" stroke="#f6f6f6" stroke-width="1.25"/><rect x="679.5" y="510.5" width="5" height="5" fill="#000" stroke="#f6f6f6" stroke-width="1.25"/><rect x="683.5" y="506.5" width="5" height="5" fill="#000" stroke="#f6f6f6" stroke-width="1.25"/><rect x="688.5" y="502.5" width="5" height="5" fill="#000" stroke="#f6f6f6" stroke-width="1.25"/><rect x="693.5" y="499.5" width="5" height="5" fill="#000" stroke="#f6f6f6" stroke-width="1.25"/><rect x="697.5" y="496.5" width="5" height="5" fill="#000" stroke="#f6f6f6" stroke-width="1.25"/><rect x="707.5" y="496.5" width="5" height="5" fill="#000" stroke="#f6f6f6" stroke-width="1.25"/><rect x="716.5" y="496.5" width="5" height="5" fill="#000" stroke="#f6f6f6" stroke-width="1.25"/><rect x="726.5" y="491.5" width="5" height="5" fill="#000" stroke="#f6f6f6" stroke-width="1.25"/><rect x="735.5" y="490.5" width="5" height="5" fill="#000" stroke="#f6f6f6" stroke-width="1.25"/><rect x="745.5" y="491.5" width="5" height="5" fill="#000" stroke="#f6f6f6" stroke-width="1.25"/><rect x="754.5" y="489.5" width="5" height="5" fill="#000" stroke="#f6f6f6" stroke-width="1.25"/><rect x="763.5" y="491.5" width="5" height="5" fill="#000" stroke="#f6f6f6" stroke-width="1.25"/><rect x="773.5" y="491.5" width="5" height="5" fill="#000" stroke="#f6f6f6" stroke-width="1.25"/><rect x="650.5" y="553.5" width="5" height="5" fill="#000" stroke="#f6f6f6" stroke-width="1.25"/><rect x="653.5" y="549.5" width="5" height="5" fill="#000" stroke="#f6f6f6" stroke-width="1.25"/><rect x="655.5" y="545.5" width="5" height="5" fill="#000" stroke="#f6f6f6" stroke-width="1.25"/><rect x="660.5" y="524.5" width="5" height="5" fill="#000" stroke="#f6f6f6" stroke-width="1.25"/><rect x="665.5" y="515.5" width="5" height="5" fill="#000" stroke="#f6f6f6" stroke-width="1.25"/><rect x="669.5" y="514.5" width="5" height="5" fill="#000" stroke="#f6f6f6" stroke-width="1.25"/><rect x="674.5" y="508.5" width="5" height="5" fill="#000" stroke="#f6f6f6" stroke-width="1.25"/><rect x="679.5" y="506.5" width="5" height="5" fill="#000" stroke="#f6f6f6" stroke-width="1.25"/><rect x="683.5" y="501.5" width="5" height="5" fill="#000" stroke="#f6f6f6" stroke-width="1.25"/><rect x="688.5" y="496.5" width="5" height="5" fill="#000" stroke="#f6f6f6" stroke-width="1.25"/><rect x="693.5" y="493.5" width="5" height="5" fill="#000" stroke="#f6f6f6" stroke-width="1.25"/><rect x="697.5" y="490.5" width="5" height="5" fill="#000" stroke="#f6f6f6" stroke-width="1.25"/><rect x="707.5" y="491.5" width="5" height="5" fill="#000" stroke="#f6f6f6" stroke-width="1.25"/><rect x="716.5" y="491.5" width="5" height="5" fill="#000" stroke="#f6f6f6" stroke-width="1.25"/><rect x="726.5" y="486.5" width="5" height="5" fill="#000" stroke="#f6f6f6" stroke-width="1.25"/><rect x="735.5" y="486.5" width="5" height="5" fill="#000" stroke="#f6f6f6" stroke-width="1.25"/><rect x="745.5" y="486.5" width="5" height="5" fill="#000" stroke="#f6f6f6" stroke-width="1.25"/><rect x="754.5" y="485.5" width="5" height="5" fill="#000" stroke="#f6f6f6" stroke-width="1.25"/><rect x="763.5" y="487.5" width="5" height="5" fill="#000" stroke="#f6f6f6" stroke-width="1.25"/><rect x="773.5" y="487.5" width="5" height="5" fill="#000" stroke="#f6f6f6" stroke-width="1.25"/><rect x="650.5" y="550.5" width="5" height="5" fill="#000" stroke="#f6f6f6" stroke-width="1.25"/><rect x="653.5" y="546.5" width="5" height="5" fill="#000" stroke="#f6f6f6" stroke-width="1.25"/><rect x="655.5" y="542.5" width="5" height="5" fill="#000" stroke="#f6f6f6" stroke-width="1.25"/><rect x="660.5" y="518.5" width="5" height="5" fill="#000" stroke="#f6f6f6" stroke-width="1.25"/><rect x="665.5" y="510.5" width="5" height="5" fill="#000" stroke="#f6f6f6" stroke-width="1.25"/><rect x="669.5" y="509.5" width="5" height="5" fill="#000" stroke="#f6f6f6" stroke-width="1.25"/><rect x="674.5" y="503.5" width="5" height="5" fill="#000" stroke="#f6f6f6" stroke-width="1.25"/><rect x="679.5" y="500.5" width="5" height="5" fill="#000" stroke="#f6f6f6" stroke-width="1.25"/><rect x="683.5" y="496.5" width="5" height="5" fill="#000" stroke="#f6f6f6" stroke-width="1.25"/><rect x="688.5" y="493.5" width="5" height="5" fill="#000" stroke="#f6f6f6" stroke-width="1.25"/><rect x="693.5" y="489.5" width="5" height="5" fill="#000" stroke="#f6f6f6" stroke-width="1.25"/><rect x="697.5" y="486.5" width="5" height="5" fill="#000" stroke="#f6f6f6" stroke-width="1.25"/><rect x="707.5" y="485.5" width="5" height="5" fill="#000" stroke="#f6f6f6" stroke-width="1.25"/><rect x="716.5" y="478.5" width="5" height="5" fill="#000" stroke="#f6f6f6" stroke-width="1.25"/><rect x="726.5" y="476.5" width="5" height="5" fill="#000" stroke="#f6f6f6" stroke-width="1.25"/><rect x="735.5" y="480.5" width="5" height="5" fill="#000" stroke="#f6f6f6" stroke-width="1.25"/><rect x="745.5" y="480.5" width="5" height="5" fill="#000" stroke="#f6f6f6" stroke-width="1.25"/><rect x="754.5" y="482.5" width="5" height="5" fill="#000" stroke="#f6f6f6" stroke-width="1.25"/><rect x="763.5" y="483.5" width="5" height="5" fill="#000" stroke="#f6f6f6" stroke-width="1.25"/><rect x="773.5" y="483.5" width="5" height="5" fill="#000" stroke="#f6f6f6" stroke-width="1.25"/><rect x="650.5" y="545.5" width="5" height="5" fill="#000" stroke="#f6f6f6" stroke-width="1.25"/><rect x="653.5" y="541.5" width="5" height="5" fill="#000" stroke="#f6f6f6" stroke-width="1.25"/><rect x="655.5" y="537.5" width="5" height="5" fill="#000" stroke="#f6f6f6" stroke-width="1.25"/><rect x="660.5" y="514.5" width="5" height="5" fill="#000" stroke="#f6f6f6" stroke-width="1.25"/><rect x="665.5" y="504.5" width="5" height="5" fill="#000" stroke="#f6f6f6" stroke-width="1.25"/><rect x="669.5" y="503.5" width="5" height="5" fill="#000" stroke="#f6f6f6" stroke-width="1.25"/><rect x="674.5" y="497.5" width="5" height="5" fill="#000" stroke="#f6f6f6" stroke-width="1.25"/><rect x="679.5" y="494.5" width="5" height="5" fill="#000" stroke="#f6f6f6" stroke-width="1.25"/><rect x="683.5" y="489.5" width="5" height="5" fill="#000" stroke="#f6f6f6" stroke-width="1.25"/><rect x="688.5" y="487.5" width="5" height="5" fill="#000" stroke="#f6f6f6" stroke-width="1.25"/><rect x="693.5" y="483.5" width="5" height="5" fill="#000" stroke="#f6f6f6" stroke-width="1.25"/><rect x="697.5" y="480.5" width="5" height="5" fill="#000" stroke="#f6f6f6" stroke-width="1.25"/><rect x="707.5" y="475.5" width="5" height="5" fill="#000" stroke="#f6f6f6" stroke-width="1.25"/><rect x="716.5" y="467.5" width="5" height="5" fill="#000" stroke="#f6f6f6" stroke-width="1.25"/><rect x="726.5" y="465.5" width="5" height="5" fill="#000" stroke="#f6f6f6" stroke-width="1.25"/><rect x="735.5" y="472.5" width="5" height="5" fill="#000" stroke="#f6f6f6" stroke-width="1.25"/><rect x="745.5" y="473.5" width="5" height="5" fill="#000" stroke="#f6f6f6" stroke-width="1.25"/><rect x="754.5" y="477.5" width="5" height="5" fill="#000" stroke="#f6f6f6" stroke-width="1.25"/><rect x="763.5" y="478.5" width="5" height="5" fill="#000" stroke="#f6f6f6" stroke-width="1.25"/><rect x="773.5" y="478.5" width="5" height="5" fill="#000" stroke="#f6f6f6" stroke-width="1.25"/><rect x="650.5" y="541.5" width="5" height="5" fill="#000" stroke="#f6f6f6" stroke-width="1.25"/><rect x="653.5" y="536.5" width="5" height="5" fill="#000" stroke="#f6f6f6" stroke-width="1.25"/><rect x="655.5" y="533.5" width="5" height="5" fill="#000" stroke="#f6f6f6" stroke-width="1.25"/><rect x="660.5" y="509.5" width="5" height="5" fill="#000" stroke="#f6f6f6" stroke-width="1.25"/><rect x="665.5" y="499.5" width="5" height="5" fill="#000" stroke="#f6f6f6" stroke-width="1.25"/><rect x="669.5" y="495.5" width="5" height="5" fill="#000" stroke="#f6f6f6" stroke-width="1.25"/><rect x="674.5" y="490.5" width="5" height="5" fill="#000" stroke="#f6f6f6" stroke-width="1.25"/><rect x="679.5" y="487.5" width="5" height="5" fill="#000" stroke="#f6f6f6" stroke-width="1.25"/><rect x="683.5" y="481.5" width="5" height="5" fill="#000" stroke="#f6f6f6" stroke-width="1.25"/><rect x="688.5" y="478.5" width="5" height="5" fill="#000" stroke="#f6f6f6" stroke-width="1.25"/><rect x="693.5" y="474.5" width="5" height="5" fill="#000" stroke="#f6f6f6" stroke-width="1.25"/><rect x="697.5" y="470.5" width="5" height="5" fill="#000" stroke="#f6f6f6" stroke-width="1.25"/><rect x="707.5" y="463.5" width="5" height="5" fill="#000" stroke="#f6f6f6" stroke-width="1.25"/><rect x="716.5" y="456.5" width="5" height="5" fill="#000" stroke="#f6f6f6" stroke-width="1.25"/><rect x="726.5" y="458.5" width="5" height="5" fill="#000" stroke="#f6f6f6" stroke-width="1.25"/><rect x="735.5" y="460.5" width="5" height="5" fill="#000" stroke="#f6f6f6" stroke-width="1.25"/><rect x="745.5" y="466.5" width="5" height="5" fill="#000" stroke="#f6f6f6" stroke-width="1.25"/><rect x="754.5" y="471.5" width="5" height="5" fill="#000" stroke="#f6f6f6" stroke-width="1.25"/><rect x="763.5" y="471.5" width="5" height="5" fill="#000" stroke="#f6f6f6" stroke-width="1.25"/><rect x="773.5" y="471.5" width="5" height="5" fill="#000" stroke="#f6f6f6" stroke-width="1.25"/><rect x="650.5" y="535.5" width="5" height="5" fill="#000" stroke="#f6f6f6" stroke-width="1.25"/><rect x="653.5" y="530.5" width="5" height="5" fill="#000" stroke="#f6f6f6" stroke-width="1.25"/><rect x="655.5" y="526.5" width="5" height="5" fill="#000" stroke="#f6f6f6" stroke-width="1.25"/><rect x="660.5" y="499.5" width="5" height="5" fill="#000" stroke="#f6f6f6" stroke-width="1.25"/><rect x="665.5" y="492.5" width="5" height="5" fill="#000" stroke="#f6f6f6" stroke-width="1.25"/><rect x="669.5" y="485.5" width="5" height="5" fill="#000" stroke="#f6f6f6" stroke-width="1.25"/><rect x="674.5" y="481.5" width="5" height="5" fill="#000" stroke="#f6f6f6" stroke-width="1.25"/><rect x="679.5" y="478.5" width="5" height="5" fill="#000" stroke="#f6f6f6" stroke-width="1.25"/><rect x="683.5" y="468.5" width="5" height="5" fill="#000" stroke="#f6f6f6" stroke-width="1.25"/><rect x="688.5" y="465.5" width="5" height="5" fill="#000" stroke="#f6f6f6" stroke-width="1.25"/><rect x="693.5" y="463.5" width="5" height="5" fill="#000" stroke="#f6f6f6" stroke-width="1.25"/><rect x="697.5" y="460.5" width="5" height="5" fill="#000" stroke="#f6f6f6" stroke-width="1.25"/><rect x="707.5" y="451.5" width="5" height="5" fill="#000" stroke="#f6f6f6" stroke-width="1.25"/><rect x="716.5" y="442.5" width="5" height="5" fill="#000" stroke="#f6f6f6" stroke-width="1.25"/><rect x="726.5" y="446.5" width="5" height="5" fill="#000" stroke="#f6f6f6" stroke-width="1.25"/><rect x="735.5" y="449.5" width="5" height="5" fill="#000" stroke="#f6f6f6" stroke-width="1.25"/><rect x="745.5" y="454.5" width="5" height="5" fill="#000" stroke="#f6f6f6" stroke-width="1.25"/><rect x="754.5" y="454.5" width="5" height="5" fill="#000" stroke="#f6f6f6" stroke-width="1.25"/><rect x="763.5" y="454.5" width="5" height="5" fill="#000" stroke="#f6f6f6" stroke-width="1.25"/><rect x="773.5" y="454.5" width="5" height="5" fill="#000" stroke="#f6f6f6" stroke-width="1.25"/><rect x="650.5" y="528.5" width="5" height="5" fill="#000" stroke="#f6f6f6" stroke-width="1.25"/><rect x="653.5" y="522.5" width="5" height="5" fill="#000" stroke="#f6f6f6" stroke-width="1.25"/><rect x="655.5" y="517.5" width="5" height="5" fill="#000" stroke="#f6f6f6" stroke-width="1.25"/><rect x="660.5" y="483.5" width="5" height="5" fill="#000" stroke="#f6f6f6" stroke-width="1.25"/><rect x="665.5" y="476.5" width="5" height="5" fill="#000" stroke="#f6f6f6" stroke-width="1.25"/><rect x="669.5" y="470.5" width="5" height="5" fill="#000" stroke="#f6f6f6" stroke-width="1.25"/><rect x="674.5" y="468.5" width="5" height="5" fill="#000" stroke="#f6f6f6" stroke-width="1.25"/><rect x="679.5" y="465.5" width="5" height="5" fill="#000" stroke="#f6f6f6" stroke-width="1.25"/><rect x="683.5" y="457.5" width="5" height="5" fill="#000" stroke="#f6f6f6" stroke-width="1.25"/><rect x="688.5" y="451.5" width="5" height="5" fill="#000" stroke="#f6f6f6" stroke-width="1.25"/><rect x="693.5" y="446.5" width="5" height="5" fill="#000" stroke="#f6f6f6" stroke-width="1.25"/><rect x="697.5" y="442.5" width="5" height="5" fill="#000" stroke="#f6f6f6" stroke-width="1.25"/><rect x="707.5" y="433.5" width="5" height="5" fill="#000" stroke="#f6f6f6" stroke-width="1.25"/><rect x="716.5" y="424.5" width="5" height="5" fill="#000" stroke="#f6f6f6" stroke-width="1.25"/><rect x="726.5" y="428.5" width="5" height="5" fill="#000" stroke="#f6f6f6" stroke-width="1.25"/><rect x="735.5" y="432.5" width="5" height="5" fill="#000" stroke="#f6f6f6" stroke-width="1.25"/><rect x="745.5" y="432.5" width="5" height="5" fill="#000" stroke="#f6f6f6" stroke-width="1.25"/><rect x="754.5" y="432.5" width="5" height="5" fill="#000" stroke="#f6f6f6" stroke-width="1.25"/><rect x="763.5" y="432.5" width="5" height="5" fill="#000" stroke="#f6f6f6" stroke-width="1.25"/><rect x="773.5" y="432.5" width="5" height="5" fill="#000" stroke="#f6f6f6" stroke-width="1.25"/><rect x="650.5" y="520.5" width="5" height="5" fill="#000" stroke="#f6f6f6" stroke-width="1.25"/><rect x="653.5" y="515.5" width="5" height="5" fill="#000" stroke="#f6f6f6" stroke-width="1.25"/><rect x="655.5" y="509.5" width="5" height="5" fill="#000" stroke="#f6f6f6" stroke-width="1.25"/><rect x="660.5" y="474.5" width="5" height="5" fill="#000" stroke="#f6f6f6" stroke-width="1.25"/><rect x="665.5" y="460.5" width="5" height="5" fill="#000" stroke="#f6f6f6" stroke-width="1.25"/><rect x="669.5" y="458.5" width="5" height="5" fill="#000" stroke="#f6f6f6" stroke-width="1.25"/><rect x="674.5" y="458.5" width="5" height="5" fill="#000" stroke="#f6f6f6" stroke-width="1.25"/><rect x="679.5" y="455.5" width="5" height="5" fill="#000" stroke="#f6f6f6" stroke-width="1.25"/><rect x="683.5" y="442.5" width="5" height="5" fill="#000" stroke="#f6f6f6" stroke-width="1.25"/><rect x="688.5" y="439.5" width="5" height="5" fill="#000" stroke="#f6f6f6" stroke-width="1.25"/><rect x="693.5" y="434.5" width="5" height="5" fill="#000" stroke="#f6f6f6" stroke-width="1.25"/><rect x="697.5" y="430.5" width="5" height="5" fill="#000" stroke="#f6f6f6" stroke-width="1.25"/><rect x="707.5" y="422.5" width="5" height="5" fill="#000" stroke="#f6f6f6" stroke-width="1.25"/><rect x="716.5" y="414.5" width="5" height="5" fill="#000" stroke="#f6f6f6" stroke-width="1.25"/><rect x="726.5" y="416.5" width="5" height="5" fill="#000" stroke="#f6f6f6" stroke-width="1.25"/><rect x="735.5" y="419.5" width="5" height="5" fill="#000" stroke="#f6f6f6" stroke-width="1.25"/><rect x="745.5" y="419.5" width="5" height="5" fill="#000" stroke="#f6f6f6" stroke-width="1.25"/><rect x="754.5" y="419.5" width="5" height="5" fill="#000" stroke="#f6f6f6" stroke-width="1.25"/><rect x="763.5" y="420.5" width="5" height="5" fill="#000" stroke="#f6f6f6" stroke-width="1.25"/><rect x="773.5" y="420.5" width="5" height="5" fill="#000" stroke="#f6f6f6" stroke-width="1.25"/><rect x="650.5" y="512.5" width="5" height="5" fill="#000" stroke="#f6f6f6" stroke-width="1.25"/><rect x="653.5" y="507.5" width="5" height="5" fill="#000" stroke="#f6f6f6" stroke-width="1.25"/><rect x="655.5" y="502.5" width="5" height="5" fill="#000" stroke="#f6f6f6" stroke-width="1.25"/><rect x="660.5" y="467.5" width="5" height="5" fill="#000" stroke="#f6f6f6" stroke-width="1.25"/><rect x="665.5" y="446.5" width="5" height="5" fill="#000" stroke="#f6f6f6" stroke-width="1.25"/><rect x="669.5" y="444.5" width="5" height="5" fill="#000" stroke="#f6f6f6" stroke-width="1.25"/><rect x="674.5" y="442.5" width="5" height="5" fill="#000" stroke="#f6f6f6" stroke-width="1.25"/><rect x="679.5" y="439.5" width="5" height="5" fill="#000" stroke="#f6f6f6" stroke-width="1.25"/><rect x="683.5" y="432.5" width="5" height="5" fill="#000" stroke="#f6f6f6" stroke-width="1.25"/><rect x="688.5" y="430.5" width="5" height="5" fill="#000" stroke="#f6f6f6" stroke-width="1.25"/><rect x="693.5" y="424.5" width="5" height="5" fill="#000" stroke="#f6f6f6" stroke-width="1.25"/><rect x="697.5" y="419.5" width="5" height="5" fill="#000" stroke="#f6f6f6" stroke-width="1.25"/><rect x="707.5" y="410.5" width="5" height="5" fill="#000" stroke="#f6f6f6" stroke-width="1.25"/><rect x="716.5" y="402.5" width="5" height="5" fill="#000" stroke="#f6f6f6" stroke-width="1.25"/><rect x="726.5" y="404.5" width="5" height="5" fill="#000" stroke="#f6f6f6" stroke-width="1.25"/><rect x="735.5" y="406.5" width="5" height="5" fill="#000" stroke="#f6f6f6" stroke-width="1.25"/><rect x="745.5" y="406.5" width="5" height="5" fill="#000" stroke="#f6f6f6" stroke-width="1.25"/><rect x="754.5" y="408.5" width="5" height="5" fill="#000" stroke="#f6f6f6" stroke-width="1.25"/><rect x="763.5" y="410.5" width="5" height="5" fill="#000" stroke="#f6f6f6" stroke-width="1.25"/><rect x="773.5" y="410.5" width="5" height="5" fill="#000" stroke="#f6f6f6" stroke-width="1.25"/><rect x="650.5" y="500.5" width="5" height="5" fill="#000" stroke="#f6f6f6" stroke-width="1.25"/><rect x="653.5" y="495.5" width="5" height="5" fill="#000" stroke="#f6f6f6" stroke-width="1.25"/><rect x="655.5" y="490.5" width="5" height="5" fill="#000" stroke="#f6f6f6" stroke-width="1.25"/><rect x="660.5" y="457.5" width="5" height="5" fill="#000" stroke="#f6f6f6" stroke-width="1.25"/><rect x="665.5" y="432.5" width="5" height="5" fill="#000" stroke="#f6f6f6" stroke-width="1.25"/><rect x="669.5" y="429.5" width="5" height="5" fill="#000" stroke="#f6f6f6" stroke-width="1.25"/><rect x="674.5" y="425.5" width="5" height="5" fill="#000" stroke="#f6f6f6" stroke-width="1.25"/><rect x="679.5" y="424.5" width="5" height="5" fill="#000" stroke="#f6f6f6" stroke-width="1.25"/><rect x="683.5" y="416.5" width="5" height="5" fill="#000" stroke="#f6f6f6" stroke-width="1.25"/><rect x="688.5" y="415.5" width="5" height="5" fill="#000" stroke="#f6f6f6" stroke-width="1.25"/><rect x="693.5" y="411.5" width="5" height="5" fill="#000" stroke="#f6f6f6" stroke-width="1.25"/><rect x="697.5" y="407.5" width="5" height="5" fill="#000" stroke="#f6f6f6" stroke-width="1.25"/><rect x="707.5" y="399.5" width="5" height="5" fill="#000" stroke="#f6f6f6" stroke-width="1.25"/><rect x="716.5" y="392.5" width="5" height="5" fill="#000" stroke="#f6f6f6" stroke-width="1.25"/><rect x="726.5" y="393.5" width="5" height="5" fill="#000" stroke="#f6f6f6" stroke-width="1.25"/><rect x="735.5" y="395.5" width="5" height="5" fill="#000" stroke="#f6f6f6" stroke-width="1.25"/><rect x="745.5" y="395.5" width="5" height="5" fill="#000" stroke="#f6f6f6" stroke-width="1.25"/><rect x="754.5" y="398.5" width="5" height="5" fill="#000" stroke="#f6f6f6" stroke-width="1.25"/><rect x="763.5" y="398.5" width="5" height="5" fill="#000" stroke="#f6f6f6" stroke-width="1.25"/><rect x="773.5" y="398.5" width="5" height="5" fill="#000" stroke="#f6f6f6" stroke-width="1.25"/><rect x="650.5" y="489.5" width="5" height="5" fill="#000" stroke="#f6f6f6" stroke-width="1.25"/><rect x="653.5" y="483.5" width="5" height="5" fill="#000" stroke="#f6f6f6" stroke-width="1.25"/><rect x="655.5" y="478.5" width="5" height="5" fill="#000" stroke="#f6f6f6" stroke-width="1.25"/><rect x="660.5" y="447.5" width="5" height="5" fill="#000" stroke="#f6f6f6" stroke-width="1.25"/><rect x="665.5" y="416.5" width="5" height="5" fill="#000" stroke="#f6f6f6" stroke-width="1.25"/><rect x="669.5" y="413.5" width="5" height="5" fill="#000" stroke="#f6f6f6" stroke-width="1.25"/><rect x="674.5" y="408.5" width="5" height="5" fill="#000" stroke="#f6f6f6" stroke-width="1.25"/><rect x="679.5" y="406.5" width="5" height="5" fill="#000" stroke="#f6f6f6" stroke-width="1.25"/><rect x="683.5" y="401.5" width="5" height="5" fill="#000" stroke="#f6f6f6" stroke-width="1.25"/><rect x="688.5" y="398.5" width="5" height="5" fill="#000" stroke="#f6f6f6" stroke-width="1.25"/><rect x="693.5" y="395.5" width="5" height="5" fill="#000" stroke="#f6f6f6" stroke-width="1.25"/><rect x="697.5" y="393.5" width="5" height="5" fill="#000" stroke="#f6f6f6" stroke-width="1.25"/><rect x="707.5" y="386.5" width="5" height="5" fill="#000" stroke="#f6f6f6" stroke-width="1.25"/><rect x="716.5" y="380.5" width="5" height="5" fill="#000" stroke="#f6f6f6" stroke-width="1.25"/><rect x="726.5" y="382.5" width="5" height="5" fill="#000" stroke="#f6f6f6" stroke-width="1.25"/><rect x="735.5" y="385.5" width="5" height="5" fill="#000" stroke="#f6f6f6" stroke-width="1.25"/><rect x="745.5" y="385.5" width="5" height="5" fill="#000" stroke="#f6f6f6" stroke-width="1.25"/><rect x="754.5" y="385.5" width="5" height="5" fill="#000" stroke="#f6f6f6" stroke-width="1.25"/><rect x="763.5" y="385.5" width="5" height="5" fill="#000" stroke="#f6f6f6" stroke-width="1.25"/><rect x="773.5" y="385.5" width="5" height="5" fill="#000" stroke="#f6f6f6" stroke-width="1.25"/><rect x="650.5" y="462.5" width="5" height="5" fill="#000" stroke="#f6f6f6" stroke-width="1.25"/><rect x="653.5" y="457.5" width="5" height="5" fill="#000" stroke="#f6f6f6" stroke-width="1.25"/><rect x="655.5" y="451.5" width="5" height="5" fill="#000" stroke="#f6f6f6" stroke-width="1.25"/><rect x="660.5" y="417.5" width="5" height="5" fill="#000" stroke="#f6f6f6" stroke-width="1.25"/><rect x="665.5" y="389.5" width="5" height="5" fill="#000" stroke="#f6f6f6" stroke-width="1.25"/><rect x="669.5" y="380.5" width="5" height="5" fill="#000" stroke="#f6f6f6" stroke-width="1.25"/><rect x="674.5" y="375.5" width="5" height="5" fill="#000" stroke="#f6f6f6" stroke-width="1.25"/><rect x="679.5" y="373.5" width="5" height="5" fill="#000" stroke="#f6f6f6" stroke-width="1.25"/><rect x="683.5" y="372.5" width="5" height="5" fill="#000" stroke="#f6f6f6" stroke-width="1.25"/><rect x="688.5" y="371.5" width="5" height="5" fill="#000" stroke="#f6f6f6" stroke-width="1.25"/><rect x="693.5" y="368.5" width="5" height="5" fill="#000" stroke="#f6f6f6" stroke-width="1.25"/><rect x="697.5" y="365.5" width="5" height="5" fill="#000" stroke="#f6f6f6" stroke-width="1.25"/><rect x="707.5" y="361.5" width="5" height="5" fill="#000" stroke="#f6f6f6" stroke-width="1.25"/><rect x="716.5" y="357.5" width="5" height="5" fill="#000" stroke="#f6f6f6" stroke-width="1.25"/><rect x="726.5" y="359.5" width="5" height="5" fill="#000" stroke="#f6f6f6" stroke-width="1.25"/><rect x="735.5" y="362.5" width="5" height="5" fill="#000" stroke="#f6f6f6" stroke-width="1.25"/><rect x="745.5" y="361.5" width="5" height="5" fill="#000" stroke="#f6f6f6" stroke-width="1.25"/><rect x="754.5" y="360.5" width="5" height="5" fill="#000" stroke="#f6f6f6" stroke-width="1.25"/><rect x="763.5" y="360.5" width="5" height="5" fill="#000" stroke="#f6f6f6" stroke-width="1.25"/><rect x="773.5" y="360.5" width="5" height="5" fill="#000" stroke="#f6f6f6" stroke-width="1.25"/><rect x="650.5" y="423.5" width="5" height="5" fill="#000" stroke="#f6f6f6" stroke-width="1.25"/><rect x="653.5" y="416.5" width="5" height="5" fill="#000" stroke="#f6f6f6" stroke-width="1.25"/><rect x="655.5" y="411.5" width="5" height="5" fill="#000" stroke="#f6f6f6" stroke-width="1.25"/><rect x="660.5" y="367.5" width="5" height="5" fill="#000" stroke="#f6f6f6" stroke-width="1.25"/><rect x="665.5" y="344.5" width="5" height="5" fill="#000" stroke="#f6f6f6" stroke-width="1.25"/><rect x="669.5" y="333.5" width="5" height="5" fill="#000" stroke="#f6f6f6" stroke-width="1.25"/><rect x="674.5" y="327.5" width="5" height="5" fill="#000" stroke="#f6f6f6" stroke-width="1.25"/><rect x="679.5" y="326.5" width="5" height="5" fill="#000" stroke="#f6f6f6" stroke-width="1.25"/><rect x="683.5" y="325.5" width="5" height="5" fill="#000" stroke="#f6f6f6" stroke-width="1.25"/><rect x="688.5" y="324.5" width="5" height="5" fill="#000" stroke="#f6f6f6" stroke-width="1.25"/><rect x="693.5" y="323.5" width="5" height="5" fill="#000" stroke="#f6f6f6" stroke-width="1.25"/><rect x="697.5" y="323.5" width="5" height="5" fill="#000" stroke="#f6f6f6" stroke-width="1.25"/><rect x="707.5" y="322.5" width="5" height="5" fill="#000" stroke="#f6f6f6" stroke-width="1.25"/><rect x="716.5" y="320.5" width="5" height="5" fill="#000" stroke="#f6f6f6" stroke-width="1.25"/><rect x="726.5" y="322.5" width="5" height="5" fill="#000" stroke="#f6f6f6" stroke-width="1.25"/><rect x="735.5" y="323.5" width="5" height="5" fill="#000" stroke="#f6f6f6" stroke-width="1.25"/><rect x="745.5" y="323.5" width="5" height="5" fill="#000" stroke="#f6f6f6" stroke-width="1.25"/><rect x="754.5" y="323.5" width="5" height="5" fill="#000" stroke="#f6f6f6" stroke-width="1.25"/><rect x="763.5" y="323.5" width="5" height="5" fill="#000" stroke="#f6f6f6" stroke-width="1.25"/><rect x="773.5" y="323.5" width="5" height="5" fill="#000" stroke="#f6f6f6" stroke-width="1.25"/></g></svg>
</body></html>
